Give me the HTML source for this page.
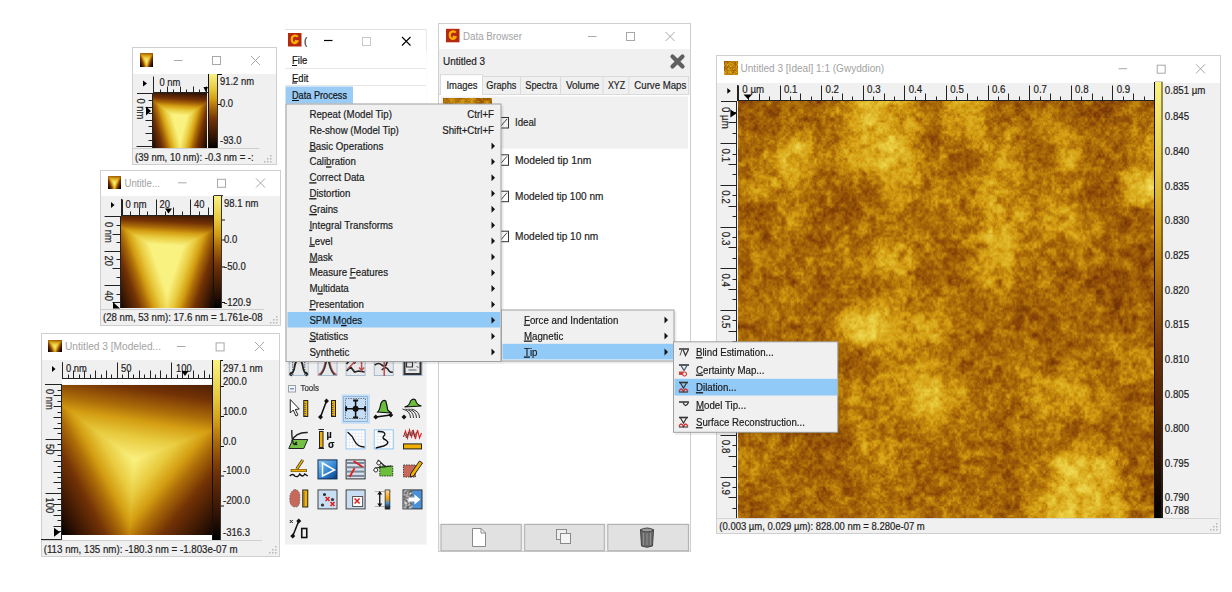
<!DOCTYPE html><html><head><meta charset="utf-8"><style>
html,body{margin:0;padding:0;background:#fff;width:1232px;height:592px;overflow:hidden}
svg{position:absolute;left:0;top:0}
text{font-family:"Liberation Sans",sans-serif}
canvas{position:absolute}
#wrap{position:absolute;left:0;top:0;width:1232px;height:592px;filter:blur(0.25px)}
</style></head><body><div id="wrap">
<svg width="1232" height="592" viewBox="0 0 1232 592" style="z-index:1"><rect x="132" y="47" width="145" height="118" fill="#cfcfcf" /><rect x="133" y="48" width="143" height="116" fill="#f0f0f0" /><rect x="133" y="48" width="143" height="26" fill="#ffffff" /><line x1="174" y1="60.5" x2="182.5" y2="60.5" stroke="#a8a8a8" stroke-width="1"/><rect x="212.5" y="56.5" width="8" height="8" fill="none" stroke="#a8a8a8" stroke-width="1"/><path d="M251 56 L260 65 M260 56 L251 65" fill="none" stroke="#a8a8a8" stroke-width="1" /><path d="M143 80.5 L147 83.5 L143 86.5 Z" fill="#000" stroke="none" stroke-width="1" /><line x1="153.5" y1="76.5" x2="153.5" y2="92.5" stroke="#222" stroke-width="1"/><line x1="153" y1="92.5" x2="209" y2="92.5" stroke="#222" stroke-width="1"/><line x1="160.5" y1="89.5" x2="160.5" y2="92.5" stroke="#222" stroke-width="1"/><line x1="167.5" y1="86.5" x2="167.5" y2="92.5" stroke="#222" stroke-width="1"/><line x1="173.5" y1="89.5" x2="173.5" y2="92.5" stroke="#222" stroke-width="1"/><line x1="180.5" y1="86.5" x2="180.5" y2="92.5" stroke="#222" stroke-width="1"/><line x1="186.5" y1="89.5" x2="186.5" y2="92.5" stroke="#222" stroke-width="1"/><line x1="193.5" y1="86.5" x2="193.5" y2="92.5" stroke="#222" stroke-width="1"/><line x1="199.5" y1="89.5" x2="199.5" y2="92.5" stroke="#222" stroke-width="1"/><line x1="206.5" y1="86.5" x2="206.5" y2="92.5" stroke="#222" stroke-width="1"/><text transform="translate(159.5,85.5) scale(0.86,1)" font-size="10.95" fill="#222" stroke="#222" stroke-width="0.2" >0 nm</text><path d="M203.5 87 L208 87 L205.75 92 Z" fill="#000" stroke="none" stroke-width="1" /><line x1="137" y1="93.5" x2="153" y2="93.5" stroke="#222" stroke-width="1"/><line x1="152.5" y1="93" x2="152.5" y2="148" stroke="#222" stroke-width="1"/><line x1="148.5" y1="100.5" x2="152.5" y2="100.5" stroke="#222" stroke-width="1"/><line x1="145.5" y1="107.5" x2="152.5" y2="107.5" stroke="#222" stroke-width="1"/><line x1="148.5" y1="113.5" x2="152.5" y2="113.5" stroke="#222" stroke-width="1"/><line x1="145.5" y1="120.5" x2="152.5" y2="120.5" stroke="#222" stroke-width="1"/><line x1="148.5" y1="126.5" x2="152.5" y2="126.5" stroke="#222" stroke-width="1"/><line x1="145.5" y1="133.5" x2="152.5" y2="133.5" stroke="#222" stroke-width="1"/><line x1="148.5" y1="140.5" x2="152.5" y2="140.5" stroke="#222" stroke-width="1"/><line x1="136.5" y1="146.5" x2="152.5" y2="146.5" stroke="#222" stroke-width="1"/><path d="M146 106.5 L151 111.0 L146 115.5 Z" fill="#000" stroke="none" stroke-width="1" /><text transform="translate(136.5,98.5) rotate(90) scale(0.86,1)" font-size="10.95" fill="#222" stroke="#222" stroke-width="0.2" >0 nm</text><line x1="208.5" y1="74" x2="208.5" y2="148" stroke="#111" stroke-width="1"/><line x1="209" y1="74.5" x2="222" y2="74.5" stroke="#111" stroke-width="1"/><line x1="218" y1="104.5" x2="221" y2="104.5" stroke="#111" stroke-width="1"/><text transform="translate(220,85.3) scale(0.86,1)" font-size="10.95" fill="#222" stroke="#222" stroke-width="0.2" >91.2 nm</text><text transform="translate(220,107.3) scale(0.86,1)" font-size="10.95" fill="#222" stroke="#222" stroke-width="0.2" >0.0</text><text transform="translate(220,144.3) scale(0.86,1)" font-size="10.95" fill="#222" stroke="#222" stroke-width="0.2" >-93.0</text><line x1="133" y1="148.5" x2="259" y2="148.5" stroke="#cfcfcf" stroke-width="1"/><text transform="translate(135,160.5) scale(0.86,1)" font-size="11.07" fill="#222" stroke="#222" stroke-width="0.2" >(39 nm, 10 nm): -0.3 nm = -:</text><rect x="259" y="149" width="17" height="15" fill="#f0f0f0" /><rect x="270" y="155" width="1.5" height="1.5" fill="#b8b8b8" /><rect x="267" y="158" width="1.5" height="1.5" fill="#b8b8b8" /><rect x="270" y="158" width="1.5" height="1.5" fill="#b8b8b8" /><rect x="264" y="161" width="1.5" height="1.5" fill="#b8b8b8" /><rect x="267" y="161" width="1.5" height="1.5" fill="#b8b8b8" /><rect x="270" y="161" width="1.5" height="1.5" fill="#b8b8b8" /><rect x="100" y="170" width="181" height="156" fill="#cfcfcf" /><rect x="101" y="171" width="179" height="154" fill="#f0f0f0" /><rect x="101" y="171" width="179" height="25" fill="#ffffff" /><text transform="translate(124.4,187) scale(0.86,1)" font-size="11.3" fill="#a2a2a2" textLength="41.28" lengthAdjust="spacingAndGlyphs" >Untitle...</text><line x1="178" y1="182.8" x2="186.5" y2="182.8" stroke="#a8a8a8" stroke-width="1"/><rect x="217.5" y="179.3" width="8" height="8" fill="none" stroke="#a8a8a8" stroke-width="1"/><path d="M256 178.5 L265 187.5 M265 178.5 L256 187.5" fill="none" stroke="#a8a8a8" stroke-width="1" /><path d="M111 202 L114.5 205.0 L111 208 Z" fill="#000" stroke="none" stroke-width="1" /><line x1="121.5" y1="198.8" x2="121.5" y2="215.5" stroke="#222" stroke-width="1"/><line x1="121" y1="215.5" x2="214" y2="215.5" stroke="#222" stroke-width="1"/><line x1="122.5" y1="199.5" x2="122.5" y2="215.5" stroke="#222" stroke-width="1"/><line x1="130.5" y1="211.5" x2="130.5" y2="215.5" stroke="#222" stroke-width="1"/><line x1="139.5" y1="207.5" x2="139.5" y2="215.5" stroke="#222" stroke-width="1"/><line x1="147.5" y1="211.5" x2="147.5" y2="215.5" stroke="#222" stroke-width="1"/><line x1="156.5" y1="199.5" x2="156.5" y2="215.5" stroke="#222" stroke-width="1"/><line x1="165.5" y1="211.5" x2="165.5" y2="215.5" stroke="#222" stroke-width="1"/><line x1="173.5" y1="207.5" x2="173.5" y2="215.5" stroke="#222" stroke-width="1"/><line x1="182.5" y1="211.5" x2="182.5" y2="215.5" stroke="#222" stroke-width="1"/><line x1="190.5" y1="199.5" x2="190.5" y2="215.5" stroke="#222" stroke-width="1"/><line x1="199.5" y1="211.5" x2="199.5" y2="215.5" stroke="#222" stroke-width="1"/><line x1="208.5" y1="207.5" x2="208.5" y2="215.5" stroke="#222" stroke-width="1"/><text transform="translate(125.6,207.5) scale(0.86,1)" font-size="10.95" fill="#222" stroke="#222" stroke-width="0.2" >0 nm</text><text transform="translate(159.5,207.5) scale(0.86,1)" font-size="10.95" fill="#222" stroke="#222" stroke-width="0.2" >20</text><text transform="translate(194,207.5) scale(0.86,1)" font-size="10.95" fill="#222" stroke="#222" stroke-width="0.2" >40</text><path d="M165 208.5 L172 208.5 L168.5 213.5 Z" fill="#000" stroke="none" stroke-width="1" /><line x1="104.6" y1="216.5" x2="121" y2="216.5" stroke="#222" stroke-width="1"/><line x1="120.5" y1="216" x2="120.5" y2="308" stroke="#222" stroke-width="1"/><line x1="116.5" y1="225.5" x2="120.5" y2="225.5" stroke="#222" stroke-width="1"/><line x1="112.5" y1="234.5" x2="120.5" y2="234.5" stroke="#222" stroke-width="1"/><line x1="116.5" y1="242.5" x2="120.5" y2="242.5" stroke="#222" stroke-width="1"/><line x1="104.5" y1="251.5" x2="120.5" y2="251.5" stroke="#222" stroke-width="1"/><line x1="116.5" y1="259.5" x2="120.5" y2="259.5" stroke="#222" stroke-width="1"/><line x1="112.5" y1="268.5" x2="120.5" y2="268.5" stroke="#222" stroke-width="1"/><line x1="116.5" y1="277.5" x2="120.5" y2="277.5" stroke="#222" stroke-width="1"/><line x1="104.5" y1="285.5" x2="120.5" y2="285.5" stroke="#222" stroke-width="1"/><line x1="116.5" y1="294.5" x2="120.5" y2="294.5" stroke="#222" stroke-width="1"/><line x1="112.5" y1="302.5" x2="120.5" y2="302.5" stroke="#222" stroke-width="1"/><text transform="translate(105.2,222) rotate(90) scale(0.86,1)" font-size="10.95" fill="#222" stroke="#222" stroke-width="0.2" >0 nm</text><text transform="translate(105.2,255.6) rotate(90) scale(0.86,1)" font-size="10.95" fill="#222" stroke="#222" stroke-width="0.2" >20</text><text transform="translate(105.2,290.6) rotate(90) scale(0.86,1)" font-size="10.95" fill="#222" stroke="#222" stroke-width="0.2" >40</text><path d="M113 302 L120 308.5 L113 308.5 Z" fill="#000" stroke="none" stroke-width="1" /><line x1="213.5" y1="195.7" x2="213.5" y2="308" stroke="#111" stroke-width="1"/><line x1="214" y1="195.7" x2="223" y2="195.7" stroke="#111" stroke-width="1"/><line x1="222" y1="220.0" x2="225" y2="220.0" stroke="#111" stroke-width="1"/><line x1="222" y1="240.0" x2="225" y2="240.0" stroke="#111" stroke-width="1"/><line x1="222" y1="267.0" x2="225" y2="267.0" stroke="#111" stroke-width="1"/><line x1="222" y1="302.5" x2="225" y2="302.5" stroke="#111" stroke-width="1"/><text transform="translate(224,207.4) scale(0.86,1)" font-size="11.07" fill="#222" stroke="#222" stroke-width="0.2" >98.1 nm</text><text transform="translate(224,242.8) scale(0.86,1)" font-size="11.07" fill="#222" stroke="#222" stroke-width="0.2" >0.0</text><text transform="translate(224,270) scale(0.86,1)" font-size="11.07" fill="#222" stroke="#222" stroke-width="0.2" >-50.0</text><text transform="translate(224,305.5) scale(0.86,1)" font-size="11.07" fill="#222" stroke="#222" stroke-width="0.2" >-120.9</text><line x1="101" y1="309.5" x2="264" y2="309.5" stroke="#cfcfcf" stroke-width="1"/><text transform="translate(103,321) scale(0.86,1)" font-size="11.07" fill="#222" textLength="185.47" lengthAdjust="spacingAndGlyphs" stroke="#222" stroke-width="0.2" >(28 nm, 53 nm): 17.6 nm = 1.761e-08</text><rect x="276" y="316" width="1.5" height="1.5" fill="#b8b8b8" /><rect x="273" y="319" width="1.5" height="1.5" fill="#b8b8b8" /><rect x="276" y="319" width="1.5" height="1.5" fill="#b8b8b8" /><rect x="270" y="322" width="1.5" height="1.5" fill="#b8b8b8" /><rect x="273" y="322" width="1.5" height="1.5" fill="#b8b8b8" /><rect x="276" y="322" width="1.5" height="1.5" fill="#b8b8b8" /><rect x="41" y="333" width="239" height="224" fill="#cfcfcf" /><rect x="42" y="334" width="237" height="222" fill="#f0f0f0" /><rect x="42" y="334" width="237" height="26" fill="#ffffff" /><text transform="translate(65,350) scale(0.86,1)" font-size="11.3" fill="#a2a2a2" textLength="111.63" lengthAdjust="spacingAndGlyphs" >Untitled 3 [Modeled...</text><line x1="177" y1="346.5" x2="185.5" y2="346.5" stroke="#a8a8a8" stroke-width="1"/><rect x="216.1" y="342.9" width="8" height="8" fill="none" stroke="#a8a8a8" stroke-width="1"/><path d="M255 342 L264 351 M264 342 L255 351" fill="none" stroke="#a8a8a8" stroke-width="1" /><path d="M52 366 L55.5 369.0 L52 372 Z" fill="#000" stroke="none" stroke-width="1" /><line x1="62.5" y1="362.3" x2="62.5" y2="378.5" stroke="#222" stroke-width="1"/><line x1="62" y1="378.5" x2="213" y2="378.5" stroke="#222" stroke-width="1"/><line x1="62.5" y1="362.5" x2="62.5" y2="378.5" stroke="#222" stroke-width="1"/><line x1="68.5" y1="374.5" x2="68.5" y2="378.5" stroke="#222" stroke-width="1"/><line x1="73.5" y1="370.5" x2="73.5" y2="378.5" stroke="#222" stroke-width="1"/><line x1="79.5" y1="374.5" x2="79.5" y2="378.5" stroke="#222" stroke-width="1"/><line x1="84.5" y1="370.5" x2="84.5" y2="378.5" stroke="#222" stroke-width="1"/><line x1="90.5" y1="374.5" x2="90.5" y2="378.5" stroke="#222" stroke-width="1"/><line x1="95.5" y1="370.5" x2="95.5" y2="378.5" stroke="#222" stroke-width="1"/><line x1="101.5" y1="374.5" x2="101.5" y2="378.5" stroke="#222" stroke-width="1"/><line x1="106.5" y1="370.5" x2="106.5" y2="378.5" stroke="#222" stroke-width="1"/><line x1="111.5" y1="374.5" x2="111.5" y2="378.5" stroke="#222" stroke-width="1"/><line x1="117.5" y1="362.5" x2="117.5" y2="378.5" stroke="#222" stroke-width="1"/><line x1="122.5" y1="374.5" x2="122.5" y2="378.5" stroke="#222" stroke-width="1"/><line x1="128.5" y1="370.5" x2="128.5" y2="378.5" stroke="#222" stroke-width="1"/><line x1="133.5" y1="374.5" x2="133.5" y2="378.5" stroke="#222" stroke-width="1"/><line x1="139.5" y1="370.5" x2="139.5" y2="378.5" stroke="#222" stroke-width="1"/><line x1="144.5" y1="374.5" x2="144.5" y2="378.5" stroke="#222" stroke-width="1"/><line x1="150.5" y1="370.5" x2="150.5" y2="378.5" stroke="#222" stroke-width="1"/><line x1="155.5" y1="374.5" x2="155.5" y2="378.5" stroke="#222" stroke-width="1"/><line x1="160.5" y1="370.5" x2="160.5" y2="378.5" stroke="#222" stroke-width="1"/><line x1="166.5" y1="374.5" x2="166.5" y2="378.5" stroke="#222" stroke-width="1"/><line x1="171.5" y1="362.5" x2="171.5" y2="378.5" stroke="#222" stroke-width="1"/><line x1="177.5" y1="374.5" x2="177.5" y2="378.5" stroke="#222" stroke-width="1"/><line x1="182.5" y1="370.5" x2="182.5" y2="378.5" stroke="#222" stroke-width="1"/><line x1="188.5" y1="374.5" x2="188.5" y2="378.5" stroke="#222" stroke-width="1"/><line x1="193.5" y1="370.5" x2="193.5" y2="378.5" stroke="#222" stroke-width="1"/><line x1="198.5" y1="374.5" x2="198.5" y2="378.5" stroke="#222" stroke-width="1"/><line x1="204.5" y1="370.5" x2="204.5" y2="378.5" stroke="#222" stroke-width="1"/><line x1="209.5" y1="374.5" x2="209.5" y2="378.5" stroke="#222" stroke-width="1"/><text transform="translate(66,371.8) scale(0.86,1)" font-size="10.95" fill="#222" stroke="#222" stroke-width="0.2" >0 nm</text><text transform="translate(121,371.8) scale(0.86,1)" font-size="10.95" fill="#222" stroke="#222" stroke-width="0.2" >50</text><text transform="translate(176,371.8) scale(0.86,1)" font-size="10.95" fill="#222" stroke="#222" stroke-width="0.2" >100</text><path d="M181.5 371 L188.5 371 L185.0 376 Z" fill="#000" stroke="none" stroke-width="1" /><rect x="62" y="379" width="150" height="5.5" fill="#ffffff" /><line x1="45" y1="384.5" x2="61" y2="384.5" stroke="#222" stroke-width="1"/><line x1="61.5" y1="384" x2="61.5" y2="540" stroke="#222" stroke-width="1"/><line x1="57.5" y1="390.5" x2="61.5" y2="390.5" stroke="#222" stroke-width="1"/><line x1="53.5" y1="395.5" x2="61.5" y2="395.5" stroke="#222" stroke-width="1"/><line x1="57.5" y1="401.5" x2="61.5" y2="401.5" stroke="#222" stroke-width="1"/><line x1="53.5" y1="406.5" x2="61.5" y2="406.5" stroke="#222" stroke-width="1"/><line x1="57.5" y1="412.5" x2="61.5" y2="412.5" stroke="#222" stroke-width="1"/><line x1="53.5" y1="417.5" x2="61.5" y2="417.5" stroke="#222" stroke-width="1"/><line x1="57.5" y1="423.5" x2="61.5" y2="423.5" stroke="#222" stroke-width="1"/><line x1="53.5" y1="428.5" x2="61.5" y2="428.5" stroke="#222" stroke-width="1"/><line x1="57.5" y1="433.5" x2="61.5" y2="433.5" stroke="#222" stroke-width="1"/><line x1="45.5" y1="439.5" x2="61.5" y2="439.5" stroke="#222" stroke-width="1"/><line x1="57.5" y1="444.5" x2="61.5" y2="444.5" stroke="#222" stroke-width="1"/><line x1="53.5" y1="450.5" x2="61.5" y2="450.5" stroke="#222" stroke-width="1"/><line x1="57.5" y1="455.5" x2="61.5" y2="455.5" stroke="#222" stroke-width="1"/><line x1="53.5" y1="461.5" x2="61.5" y2="461.5" stroke="#222" stroke-width="1"/><line x1="57.5" y1="466.5" x2="61.5" y2="466.5" stroke="#222" stroke-width="1"/><line x1="53.5" y1="472.5" x2="61.5" y2="472.5" stroke="#222" stroke-width="1"/><line x1="57.5" y1="477.5" x2="61.5" y2="477.5" stroke="#222" stroke-width="1"/><line x1="53.5" y1="482.5" x2="61.5" y2="482.5" stroke="#222" stroke-width="1"/><line x1="57.5" y1="488.5" x2="61.5" y2="488.5" stroke="#222" stroke-width="1"/><line x1="45.5" y1="493.5" x2="61.5" y2="493.5" stroke="#222" stroke-width="1"/><line x1="57.5" y1="499.5" x2="61.5" y2="499.5" stroke="#222" stroke-width="1"/><line x1="53.5" y1="504.5" x2="61.5" y2="504.5" stroke="#222" stroke-width="1"/><line x1="57.5" y1="510.5" x2="61.5" y2="510.5" stroke="#222" stroke-width="1"/><line x1="53.5" y1="515.5" x2="61.5" y2="515.5" stroke="#222" stroke-width="1"/><line x1="57.5" y1="520.5" x2="61.5" y2="520.5" stroke="#222" stroke-width="1"/><line x1="53.5" y1="526.5" x2="61.5" y2="526.5" stroke="#222" stroke-width="1"/><line x1="57.5" y1="531.5" x2="61.5" y2="531.5" stroke="#222" stroke-width="1"/><text transform="translate(45.5,389) rotate(90) scale(0.86,1)" font-size="10.95" fill="#222" stroke="#222" stroke-width="0.2" >0 nm</text><text transform="translate(45.5,444) rotate(90) scale(0.86,1)" font-size="10.95" fill="#222" stroke="#222" stroke-width="0.2" >50</text><text transform="translate(45.5,497.5) rotate(90) scale(0.86,1)" font-size="10.95" fill="#222" stroke="#222" stroke-width="0.2" >100</text><path d="M54 527.8 L60 532.3 L54 536.8 Z" fill="#000" stroke="none" stroke-width="1" /><rect x="62" y="534.5" width="150" height="5.5" fill="#ffffff" /><line x1="41" y1="539.5" x2="62" y2="539.5" stroke="#222" stroke-width="1"/><line x1="212.5" y1="360" x2="212.5" y2="540" stroke="#111" stroke-width="1"/><line x1="213" y1="360.5" x2="223" y2="360.5" stroke="#111" stroke-width="1"/><text transform="translate(223,371.5) scale(0.86,1)" font-size="11.07" fill="#222" stroke="#222" stroke-width="0.2" >297.1 nm</text><text transform="translate(223,384.5) scale(0.86,1)" font-size="11.07" fill="#222" stroke="#222" stroke-width="0.2" >200.0</text><text transform="translate(223,414.5) scale(0.86,1)" font-size="11.07" fill="#222" stroke="#222" stroke-width="0.2" >100.0</text><text transform="translate(223,444.5) scale(0.86,1)" font-size="11.07" fill="#222" stroke="#222" stroke-width="0.2" >0.0</text><text transform="translate(223,473.8) scale(0.86,1)" font-size="11.07" fill="#222" stroke="#222" stroke-width="0.2" >-100.0</text><text transform="translate(223,503.8) scale(0.86,1)" font-size="11.07" fill="#222" stroke="#222" stroke-width="0.2" >-200.0</text><text transform="translate(223,536.3) scale(0.86,1)" font-size="11.07" fill="#222" stroke="#222" stroke-width="0.2" >-316.3</text><line x1="220" y1="386.5" x2="224" y2="386.5" stroke="#111" stroke-width="1"/><line x1="220" y1="416.5" x2="224" y2="416.5" stroke="#111" stroke-width="1"/><line x1="220" y1="446.5" x2="224" y2="446.5" stroke="#111" stroke-width="1"/><line x1="220" y1="476.0" x2="224" y2="476.0" stroke="#111" stroke-width="1"/><line x1="220" y1="506.0" x2="224" y2="506.0" stroke="#111" stroke-width="1"/><line x1="41" y1="540.5" x2="262" y2="540.5" stroke="#cfcfcf" stroke-width="1"/><text transform="translate(43.7,552.5) scale(0.86,1)" font-size="11.07" fill="#222" textLength="225.58" lengthAdjust="spacingAndGlyphs" stroke="#222" stroke-width="0.2" >(113 nm, 135 nm): -180.3 nm = -1.803e-07 m</text><rect x="275" y="546" width="1.5" height="1.5" fill="#b8b8b8" /><rect x="272" y="549" width="1.5" height="1.5" fill="#b8b8b8" /><rect x="275" y="549" width="1.5" height="1.5" fill="#b8b8b8" /><rect x="269" y="552" width="1.5" height="1.5" fill="#b8b8b8" /><rect x="272" y="552" width="1.5" height="1.5" fill="#b8b8b8" /><rect x="275" y="552" width="1.5" height="1.5" fill="#b8b8b8" /><rect x="285" y="30" width="141.5" height="514.5" fill="#f0f0f0" /><rect x="285" y="30" width="141.5" height="73.5" fill="#ffffff" /><line x1="426.5" y1="30" x2="426.5" y2="51" stroke="#e8e8e8" stroke-width="1"/><line x1="285" y1="29.5" x2="426.5" y2="29.5" stroke="#e0e0e0" stroke-width="1"/><rect x="288" y="33" width="13.5" height="13.5" fill="#b52a0f" /><path d="M297.72 36.78 C296.1 34.62 291.375 35.43 291.78 39.75 C292.05 43.8 296.1 44.07 297.45 41.37 L294.75 40.83" fill="none" stroke="#ffb000" stroke-width="2.16" /><text transform="translate(304,44.5) scale(0.86,1)" font-size="11.3" fill="#222" stroke="#222" stroke-width="0.2" >(</text><line x1="324" y1="40.5" x2="332.5" y2="40.5" stroke="#000" stroke-width="1.2"/><rect x="362.5" y="37.5" width="8" height="8" fill="none" stroke="#c8c8c8" stroke-width="1"/><path d="M402 37 L410.5 45.5 M410.5 37 L402 45.5" fill="none" stroke="#000" stroke-width="1.1" /><line x1="285" y1="68.5" x2="426" y2="68.5" stroke="#e6e6e6" stroke-width="1"/><line x1="285" y1="85.5" x2="426" y2="85.5" stroke="#e6e6e6" stroke-width="1"/><text transform="translate(292,64) scale(0.86,1)" font-size="11.07" fill="#111" stroke="#111" stroke-width="0.2" >File</text><line x1="292" y1="65.5" x2="297" y2="65.5" stroke="#111" stroke-width="1"/><text transform="translate(292,81.5) scale(0.86,1)" font-size="11.07" fill="#111" stroke="#111" stroke-width="0.2" >Edit</text><line x1="292" y1="83" x2="297" y2="83" stroke="#111" stroke-width="1"/><rect x="285.5" y="86.5" width="67.5" height="17" fill="#99cbf5" /><text transform="translate(292,99) scale(0.86,1)" font-size="10.84" fill="#111" textLength="63.95" lengthAdjust="spacingAndGlyphs" stroke="#111" stroke-width="0.2" >Data Process</text><line x1="292" y1="100.5" x2="299" y2="100.5" stroke="#111" stroke-width="1"/><rect x="438" y="23" width="253" height="529" fill="#cfcfcf" /><rect x="439" y="24" width="251" height="527" fill="#f0f0f0" /><rect x="439" y="24" width="251" height="25" fill="#ffffff" /><rect x="446" y="28.8" width="13.5" height="13.5" fill="#b52a0f" /><path d="M455.72 32.58 C454.1 30.42 449.375 31.23 449.78 35.55 C450.05 39.6 454.1 39.87 455.45 37.17 L452.75 36.63" fill="none" stroke="#ffb000" stroke-width="2.16" /><text transform="translate(463,40) scale(0.86,1)" font-size="11.3" fill="#a2a2a2" textLength="68.6" lengthAdjust="spacingAndGlyphs" >Data Browser</text><line x1="588" y1="36.5" x2="596.5" y2="36.5" stroke="#a8a8a8" stroke-width="1"/><rect x="626.5" y="32.5" width="8" height="8" fill="none" stroke="#a8a8a8" stroke-width="1"/><path d="M665.6 32 L674.6 41 M674.6 32 L665.6 41" fill="none" stroke="#a8a8a8" stroke-width="1" /><text transform="translate(443,64.5) scale(0.86,1)" font-size="11.3" fill="#222" textLength="48.84" lengthAdjust="spacingAndGlyphs" stroke="#222" stroke-width="0.2" >Untitled 3</text><path d="M672.5 56.5 L682.5 66.5 M682.5 56.5 L672.5 66.5" fill="none" stroke="#5f5f5f" stroke-width="4.2" stroke-linecap="round"/><rect x="439" y="75" width="251" height="20" fill="#f0f0f0" /><line x1="439" y1="94.5" x2="689" y2="94.5" stroke="#dadada" stroke-width="1"/><rect x="440" y="74.7" width="42" height="20.5" fill="#ffffff" /><line x1="440.5" y1="74.7" x2="440.5" y2="95" stroke="#dadada" stroke-width="1"/><line x1="482.5" y1="74.7" x2="482.5" y2="95" stroke="#dadada" stroke-width="1"/><line x1="440" y1="74.7" x2="482.5" y2="74.7" stroke="#dadada" stroke-width="1"/><line x1="482" y1="76.5" x2="689" y2="76.5" stroke="#dadada" stroke-width="1"/><line x1="520.5" y1="76.5" x2="520.5" y2="94.5" stroke="#dadada" stroke-width="1"/><line x1="560.5" y1="76.5" x2="560.5" y2="94.5" stroke="#dadada" stroke-width="1"/><line x1="603" y1="76.5" x2="603" y2="94.5" stroke="#dadada" stroke-width="1"/><line x1="628.8" y1="76.5" x2="628.8" y2="94.5" stroke="#dadada" stroke-width="1"/><line x1="688.5" y1="76.5" x2="688.5" y2="94.5" stroke="#dadada" stroke-width="1"/><text transform="translate(446.4,88.9) scale(0.86,1)" font-size="11.3" fill="#222" textLength="36.05" lengthAdjust="spacingAndGlyphs" stroke="#222" stroke-width="0.2" >Images</text><text transform="translate(486.3,88.9) scale(0.86,1)" font-size="11.3" fill="#222" textLength="35.0" lengthAdjust="spacingAndGlyphs" stroke="#222" stroke-width="0.2" >Graphs</text><text transform="translate(525.3,88.9) scale(0.86,1)" font-size="11.3" fill="#222" textLength="37.09" lengthAdjust="spacingAndGlyphs" stroke="#222" stroke-width="0.2" >Spectra</text><text transform="translate(565.9,88.9) scale(0.86,1)" font-size="11.3" fill="#222" textLength="38.84" lengthAdjust="spacingAndGlyphs" stroke="#222" stroke-width="0.2" >Volume</text><text transform="translate(607.9,88.9) scale(0.86,1)" font-size="11.3" fill="#222" textLength="19.88" lengthAdjust="spacingAndGlyphs" stroke="#222" stroke-width="0.2" >XYZ</text><text transform="translate(634.3,88.9) scale(0.86,1)" font-size="11.3" fill="#222" textLength="60.47" lengthAdjust="spacingAndGlyphs" stroke="#222" stroke-width="0.2" >Curve Maps</text><rect x="439" y="95" width="251" height="428.5" fill="#ffffff" /><rect x="441" y="96.5" width="247" height="52" fill="#f0f0f0" /><rect x="498.5" y="117.5" width="10" height="10.5" fill="none" stroke="#333" stroke-width="1"/><path d="M500.5 126.5 L507 119.0" fill="none" stroke="#444" stroke-width="1" /><text transform="translate(515,126.2) scale(0.86,1)" font-size="11.3" fill="#222" textLength="24.42" lengthAdjust="spacingAndGlyphs" stroke="#222" stroke-width="0.2" >Ideal</text><rect x="498.5" y="154.8" width="10" height="10.5" fill="none" stroke="#333" stroke-width="1"/><path d="M500.5 163.8 L507 156.3" fill="none" stroke="#444" stroke-width="1" /><text transform="translate(515,163.5) scale(0.86,1)" font-size="11.3" fill="#222" textLength="88.72" lengthAdjust="spacingAndGlyphs" stroke="#222" stroke-width="0.2" >Modeled tip 1nm</text><rect x="498.5" y="191.2" width="10" height="10.5" fill="none" stroke="#333" stroke-width="1"/><path d="M500.5 200.2 L507 192.7" fill="none" stroke="#444" stroke-width="1" /><text transform="translate(515,199.89999999999998) scale(0.86,1)" font-size="11.3" fill="#222" textLength="102.79" lengthAdjust="spacingAndGlyphs" stroke="#222" stroke-width="0.2" >Modeled tip 100 nm</text><rect x="498.5" y="231.2" width="10" height="10.5" fill="none" stroke="#333" stroke-width="1"/><path d="M500.5 240.2 L507 232.7" fill="none" stroke="#444" stroke-width="1" /><text transform="translate(515,239.89999999999998) scale(0.86,1)" font-size="11.3" fill="#222" textLength="96.74" lengthAdjust="spacingAndGlyphs" stroke="#222" stroke-width="0.2" >Modeled tip 10 nm</text><rect x="440.5" y="523.9" width="81.2" height="27.4" fill="#adadad" /><rect x="441.5" y="524.9" width="79.2" height="25.4" fill="#e1e1e1" /><rect x="524.2" y="523.9" width="80.6" height="27.4" fill="#adadad" /><rect x="525.2" y="524.9" width="78.6" height="25.4" fill="#e1e1e1" /><rect x="607.3" y="523.9" width="81.6" height="27.4" fill="#adadad" /><rect x="608.3" y="524.9" width="79.6" height="25.4" fill="#e1e1e1" /><path d="M472.5 528.5 L481 528.5 L485.5 533 L485.5 546.5 L472.5 546.5 Z" fill="#fff" stroke="#8a8a8a" stroke-width="1" /><path d="M481 528.5 L481 533 L485.5 533" fill="none" stroke="#8a8a8a" stroke-width="1" /><rect x="556.5" y="529.5" width="10" height="10" fill="#eee" stroke="#8a8a8a" stroke-width="1"/><rect x="560.5" y="533.5" width="10" height="10" fill="#f4f4f4" stroke="#8a8a8a" stroke-width="1"/><path d="M640.5 530 L653.5 530 L652.5 546 Q647 548.5 641.5 546 Z" fill="#6a6a6a" stroke="#444" stroke-width="1" /><path d="M640 530 Q647 526 654 530 Q647 534 640 530 Z" fill="#999" stroke="#444" stroke-width="1" /><line x1="643.5" y1="533" x2="643.5" y2="545" stroke="#8f8f8f" stroke-width="1"/><line x1="647" y1="533" x2="647" y2="545" stroke="#8f8f8f" stroke-width="1"/><line x1="650.5" y1="533" x2="650.5" y2="545" stroke="#8f8f8f" stroke-width="1"/><rect x="716" y="55" width="505" height="479" fill="#cfcfcf" /><rect x="717" y="56" width="503" height="477" fill="#f0f0f0" /><rect x="717" y="56" width="503" height="27" fill="#ffffff" /><text transform="translate(740.5,72.3) scale(0.86,1)" font-size="11.3" fill="#a2a2a2" textLength="167.09" lengthAdjust="spacingAndGlyphs" >Untitled 3 [Ideal] 1:1 (Gwyddion)</text><line x1="1118.6" y1="68.7" x2="1127.1" y2="68.7" stroke="#a8a8a8" stroke-width="1"/><rect x="1157.2" y="65.2" width="8" height="8" fill="none" stroke="#a8a8a8" stroke-width="1"/><path d="M1196 64.3 L1205 73.3 M1205 64.3 L1196 73.3" fill="none" stroke="#a8a8a8" stroke-width="1" /><path d="M727.3 88 L730.8 90.9 L727.3 93.8 Z" fill="#000" stroke="none" stroke-width="1" /><line x1="737.5" y1="85" x2="737.5" y2="100.5" stroke="#222" stroke-width="1"/><line x1="737" y1="100.5" x2="1154" y2="100.5" stroke="#222" stroke-width="1"/><line x1="738.5" y1="85.5" x2="738.5" y2="100.5" stroke="#222" stroke-width="1"/><line x1="748.5" y1="96.5" x2="748.5" y2="100.5" stroke="#222" stroke-width="1"/><line x1="759.5" y1="93.5" x2="759.5" y2="100.5" stroke="#222" stroke-width="1"/><line x1="769.5" y1="96.5" x2="769.5" y2="100.5" stroke="#222" stroke-width="1"/><line x1="780.5" y1="85.5" x2="780.5" y2="100.5" stroke="#222" stroke-width="1"/><line x1="790.5" y1="96.5" x2="790.5" y2="100.5" stroke="#222" stroke-width="1"/><line x1="800.5" y1="93.5" x2="800.5" y2="100.5" stroke="#222" stroke-width="1"/><line x1="811.5" y1="96.5" x2="811.5" y2="100.5" stroke="#222" stroke-width="1"/><line x1="821.5" y1="85.5" x2="821.5" y2="100.5" stroke="#222" stroke-width="1"/><line x1="832.5" y1="96.5" x2="832.5" y2="100.5" stroke="#222" stroke-width="1"/><line x1="842.5" y1="93.5" x2="842.5" y2="100.5" stroke="#222" stroke-width="1"/><line x1="852.5" y1="96.5" x2="852.5" y2="100.5" stroke="#222" stroke-width="1"/><line x1="863.5" y1="85.5" x2="863.5" y2="100.5" stroke="#222" stroke-width="1"/><line x1="873.5" y1="96.5" x2="873.5" y2="100.5" stroke="#222" stroke-width="1"/><line x1="884.5" y1="93.5" x2="884.5" y2="100.5" stroke="#222" stroke-width="1"/><line x1="894.5" y1="96.5" x2="894.5" y2="100.5" stroke="#222" stroke-width="1"/><line x1="904.5" y1="85.5" x2="904.5" y2="100.5" stroke="#222" stroke-width="1"/><line x1="915.5" y1="96.5" x2="915.5" y2="100.5" stroke="#222" stroke-width="1"/><line x1="925.5" y1="93.5" x2="925.5" y2="100.5" stroke="#222" stroke-width="1"/><line x1="936.5" y1="96.5" x2="936.5" y2="100.5" stroke="#222" stroke-width="1"/><line x1="946.5" y1="85.5" x2="946.5" y2="100.5" stroke="#222" stroke-width="1"/><line x1="956.5" y1="96.5" x2="956.5" y2="100.5" stroke="#222" stroke-width="1"/><line x1="967.5" y1="93.5" x2="967.5" y2="100.5" stroke="#222" stroke-width="1"/><line x1="977.5" y1="96.5" x2="977.5" y2="100.5" stroke="#222" stroke-width="1"/><line x1="988.5" y1="85.5" x2="988.5" y2="100.5" stroke="#222" stroke-width="1"/><line x1="998.5" y1="96.5" x2="998.5" y2="100.5" stroke="#222" stroke-width="1"/><line x1="1008.5" y1="93.5" x2="1008.5" y2="100.5" stroke="#222" stroke-width="1"/><line x1="1019.5" y1="96.5" x2="1019.5" y2="100.5" stroke="#222" stroke-width="1"/><line x1="1029.5" y1="85.5" x2="1029.5" y2="100.5" stroke="#222" stroke-width="1"/><line x1="1040.5" y1="96.5" x2="1040.5" y2="100.5" stroke="#222" stroke-width="1"/><line x1="1050.5" y1="93.5" x2="1050.5" y2="100.5" stroke="#222" stroke-width="1"/><line x1="1060.5" y1="96.5" x2="1060.5" y2="100.5" stroke="#222" stroke-width="1"/><line x1="1071.5" y1="85.5" x2="1071.5" y2="100.5" stroke="#222" stroke-width="1"/><line x1="1081.5" y1="96.5" x2="1081.5" y2="100.5" stroke="#222" stroke-width="1"/><line x1="1092.5" y1="93.5" x2="1092.5" y2="100.5" stroke="#222" stroke-width="1"/><line x1="1102.5" y1="96.5" x2="1102.5" y2="100.5" stroke="#222" stroke-width="1"/><line x1="1112.5" y1="85.5" x2="1112.5" y2="100.5" stroke="#222" stroke-width="1"/><line x1="1123.5" y1="96.5" x2="1123.5" y2="100.5" stroke="#222" stroke-width="1"/><line x1="1133.5" y1="93.5" x2="1133.5" y2="100.5" stroke="#222" stroke-width="1"/><line x1="1144.5" y1="96.5" x2="1144.5" y2="100.5" stroke="#222" stroke-width="1"/><text transform="translate(742.3,93.3) scale(0.86,1)" font-size="11.3" fill="#222" stroke="#222" stroke-width="0.2" >0 µm</text><text transform="translate(783.9,93.3) scale(0.86,1)" font-size="11.3" fill="#222" stroke="#222" stroke-width="0.2" >0.1</text><text transform="translate(825.5,93.3) scale(0.86,1)" font-size="11.3" fill="#222" stroke="#222" stroke-width="0.2" >0.2</text><text transform="translate(867.0999999999999,93.3) scale(0.86,1)" font-size="11.3" fill="#222" stroke="#222" stroke-width="0.2" >0.3</text><text transform="translate(908.6999999999999,93.3) scale(0.86,1)" font-size="11.3" fill="#222" stroke="#222" stroke-width="0.2" >0.4</text><text transform="translate(950.3,93.3) scale(0.86,1)" font-size="11.3" fill="#222" stroke="#222" stroke-width="0.2" >0.5</text><text transform="translate(991.9,93.3) scale(0.86,1)" font-size="11.3" fill="#222" stroke="#222" stroke-width="0.2" >0.6</text><text transform="translate(1033.5,93.3) scale(0.86,1)" font-size="11.3" fill="#222" stroke="#222" stroke-width="0.2" >0.7</text><text transform="translate(1075.1,93.3) scale(0.86,1)" font-size="11.3" fill="#222" stroke="#222" stroke-width="0.2" >0.8</text><text transform="translate(1116.7,93.3) scale(0.86,1)" font-size="11.3" fill="#222" stroke="#222" stroke-width="0.2" >0.9</text><path d="M743.5 94.5 L752.2 94.5 L747.85 99.0 Z" fill="#000" stroke="none" stroke-width="1" /><line x1="721" y1="101.5" x2="737" y2="101.5" stroke="#222" stroke-width="1"/><line x1="736.5" y1="101" x2="736.5" y2="518" stroke="#222" stroke-width="1"/><line x1="732.5" y1="112.5" x2="736.5" y2="112.5" stroke="#222" stroke-width="1"/><line x1="728.5" y1="122.5" x2="736.5" y2="122.5" stroke="#222" stroke-width="1"/><line x1="732.5" y1="133.5" x2="736.5" y2="133.5" stroke="#222" stroke-width="1"/><line x1="720.5" y1="143.5" x2="736.5" y2="143.5" stroke="#222" stroke-width="1"/><line x1="732.5" y1="154.5" x2="736.5" y2="154.5" stroke="#222" stroke-width="1"/><line x1="728.5" y1="164.5" x2="736.5" y2="164.5" stroke="#222" stroke-width="1"/><line x1="732.5" y1="174.5" x2="736.5" y2="174.5" stroke="#222" stroke-width="1"/><line x1="720.5" y1="185.5" x2="736.5" y2="185.5" stroke="#222" stroke-width="1"/><line x1="732.5" y1="195.5" x2="736.5" y2="195.5" stroke="#222" stroke-width="1"/><line x1="728.5" y1="206.5" x2="736.5" y2="206.5" stroke="#222" stroke-width="1"/><line x1="732.5" y1="216.5" x2="736.5" y2="216.5" stroke="#222" stroke-width="1"/><line x1="720.5" y1="227.5" x2="736.5" y2="227.5" stroke="#222" stroke-width="1"/><line x1="732.5" y1="237.5" x2="736.5" y2="237.5" stroke="#222" stroke-width="1"/><line x1="728.5" y1="247.5" x2="736.5" y2="247.5" stroke="#222" stroke-width="1"/><line x1="732.5" y1="258.5" x2="736.5" y2="258.5" stroke="#222" stroke-width="1"/><line x1="720.5" y1="268.5" x2="736.5" y2="268.5" stroke="#222" stroke-width="1"/><line x1="732.5" y1="279.5" x2="736.5" y2="279.5" stroke="#222" stroke-width="1"/><line x1="728.5" y1="289.5" x2="736.5" y2="289.5" stroke="#222" stroke-width="1"/><line x1="732.5" y1="299.5" x2="736.5" y2="299.5" stroke="#222" stroke-width="1"/><line x1="720.5" y1="310.5" x2="736.5" y2="310.5" stroke="#222" stroke-width="1"/><line x1="732.5" y1="320.5" x2="736.5" y2="320.5" stroke="#222" stroke-width="1"/><line x1="728.5" y1="331.5" x2="736.5" y2="331.5" stroke="#222" stroke-width="1"/><line x1="732.5" y1="341.5" x2="736.5" y2="341.5" stroke="#222" stroke-width="1"/><line x1="720.5" y1="352.5" x2="736.5" y2="352.5" stroke="#222" stroke-width="1"/><line x1="732.5" y1="362.5" x2="736.5" y2="362.5" stroke="#222" stroke-width="1"/><line x1="728.5" y1="372.5" x2="736.5" y2="372.5" stroke="#222" stroke-width="1"/><line x1="732.5" y1="383.5" x2="736.5" y2="383.5" stroke="#222" stroke-width="1"/><line x1="720.5" y1="393.5" x2="736.5" y2="393.5" stroke="#222" stroke-width="1"/><line x1="732.5" y1="404.5" x2="736.5" y2="404.5" stroke="#222" stroke-width="1"/><line x1="728.5" y1="414.5" x2="736.5" y2="414.5" stroke="#222" stroke-width="1"/><line x1="732.5" y1="425.5" x2="736.5" y2="425.5" stroke="#222" stroke-width="1"/><line x1="720.5" y1="435.5" x2="736.5" y2="435.5" stroke="#222" stroke-width="1"/><line x1="732.5" y1="445.5" x2="736.5" y2="445.5" stroke="#222" stroke-width="1"/><line x1="728.5" y1="456.5" x2="736.5" y2="456.5" stroke="#222" stroke-width="1"/><line x1="732.5" y1="466.5" x2="736.5" y2="466.5" stroke="#222" stroke-width="1"/><line x1="720.5" y1="477.5" x2="736.5" y2="477.5" stroke="#222" stroke-width="1"/><line x1="732.5" y1="487.5" x2="736.5" y2="487.5" stroke="#222" stroke-width="1"/><line x1="728.5" y1="497.5" x2="736.5" y2="497.5" stroke="#222" stroke-width="1"/><line x1="732.5" y1="508.5" x2="736.5" y2="508.5" stroke="#222" stroke-width="1"/><text transform="translate(721.5,107.0) rotate(90) scale(0.86,1)" font-size="11.3" fill="#222" stroke="#222" stroke-width="0.2" >0 µm</text><text transform="translate(721.5,148.6) rotate(90) scale(0.86,1)" font-size="11.3" fill="#222" stroke="#222" stroke-width="0.2" >0.1</text><text transform="translate(721.5,190.2) rotate(90) scale(0.86,1)" font-size="11.3" fill="#222" stroke="#222" stroke-width="0.2" >0.2</text><text transform="translate(721.5,231.8) rotate(90) scale(0.86,1)" font-size="11.3" fill="#222" stroke="#222" stroke-width="0.2" >0.3</text><text transform="translate(721.5,273.4) rotate(90) scale(0.86,1)" font-size="11.3" fill="#222" stroke="#222" stroke-width="0.2" >0.4</text><text transform="translate(721.5,315.0) rotate(90) scale(0.86,1)" font-size="11.3" fill="#222" stroke="#222" stroke-width="0.2" >0.5</text><text transform="translate(721.5,356.6) rotate(90) scale(0.86,1)" font-size="11.3" fill="#222" stroke="#222" stroke-width="0.2" >0.6</text><text transform="translate(721.5,398.2) rotate(90) scale(0.86,1)" font-size="11.3" fill="#222" stroke="#222" stroke-width="0.2" >0.7</text><text transform="translate(721.5,439.8) rotate(90) scale(0.86,1)" font-size="11.3" fill="#222" stroke="#222" stroke-width="0.2" >0.8</text><text transform="translate(721.5,481.40000000000003) rotate(90) scale(0.86,1)" font-size="11.3" fill="#222" stroke="#222" stroke-width="0.2" >0.9</text><path d="M730.4 109.4 L736.4 113.5 L730.4 117.60000000000001 Z" fill="#000" stroke="none" stroke-width="1" /><line x1="1154.5" y1="82" x2="1154.5" y2="518" stroke="#111" stroke-width="1"/><line x1="1155" y1="82.3" x2="1163" y2="82.3" stroke="#111" stroke-width="1"/><text transform="translate(1164.8,93.5) scale(0.86,1)" font-size="11.3" fill="#222" stroke="#222" stroke-width="0.2" >0.851 µm</text><text transform="translate(1164.8,119.8) scale(0.86,1)" font-size="11.3" fill="#222" stroke="#222" stroke-width="0.2" >0.845</text><text transform="translate(1164.8,154.5) scale(0.86,1)" font-size="11.3" fill="#222" stroke="#222" stroke-width="0.2" >0.840</text><text transform="translate(1164.8,189.5) scale(0.86,1)" font-size="11.3" fill="#222" stroke="#222" stroke-width="0.2" >0.835</text><text transform="translate(1164.8,224.0) scale(0.86,1)" font-size="11.3" fill="#222" stroke="#222" stroke-width="0.2" >0.830</text><text transform="translate(1164.8,258.5) scale(0.86,1)" font-size="11.3" fill="#222" stroke="#222" stroke-width="0.2" >0.825</text><text transform="translate(1164.8,293.5) scale(0.86,1)" font-size="11.3" fill="#222" stroke="#222" stroke-width="0.2" >0.820</text><text transform="translate(1164.8,328.0) scale(0.86,1)" font-size="11.3" fill="#222" stroke="#222" stroke-width="0.2" >0.815</text><text transform="translate(1164.8,362.5) scale(0.86,1)" font-size="11.3" fill="#222" stroke="#222" stroke-width="0.2" >0.810</text><text transform="translate(1164.8,397.5) scale(0.86,1)" font-size="11.3" fill="#222" stroke="#222" stroke-width="0.2" >0.805</text><text transform="translate(1164.8,432.0) scale(0.86,1)" font-size="11.3" fill="#222" stroke="#222" stroke-width="0.2" >0.800</text><text transform="translate(1164.8,466.5) scale(0.86,1)" font-size="11.3" fill="#222" stroke="#222" stroke-width="0.2" >0.795</text><text transform="translate(1164.8,500.5) scale(0.86,1)" font-size="11.3" fill="#222" stroke="#222" stroke-width="0.2" >0.790</text><text transform="translate(1164.8,514.0) scale(0.86,1)" font-size="11.3" fill="#222" stroke="#222" stroke-width="0.2" >0.788</text><line x1="717" y1="518.5" x2="1219" y2="518.5" stroke="#d6d6d6" stroke-width="1"/><text transform="translate(719.3,529.5) scale(0.86,1)" font-size="11.3" fill="#222" textLength="238.95" lengthAdjust="spacingAndGlyphs" stroke="#222" stroke-width="0.2" >(0.003 µm, 0.029 µm): 828.00 nm = 8.280e-07 m</text><rect x="1216" y="523" width="1.5" height="1.5" fill="#b8b8b8" /><rect x="1213" y="526" width="1.5" height="1.5" fill="#b8b8b8" /><rect x="1216" y="526" width="1.5" height="1.5" fill="#b8b8b8" /><rect x="1210" y="529" width="1.5" height="1.5" fill="#b8b8b8" /><rect x="1213" y="529" width="1.5" height="1.5" fill="#b8b8b8" /><rect x="1216" y="529" width="1.5" height="1.5" fill="#b8b8b8" /><rect x="288.75" y="356" width="20" height="20" fill="#a9bccf" /><rect x="289.75" y="357" width="18" height="18" fill="#e6e8ea" /><rect x="317.5" y="356" width="20" height="20" fill="#a9bccf" /><rect x="318.5" y="357" width="18" height="18" fill="#e6e8ea" /><rect x="345.6" y="356" width="20" height="20" fill="#a9bccf" /><rect x="346.6" y="357" width="18" height="18" fill="#e6e8ea" /><rect x="373.75" y="356" width="20" height="20" fill="#a9bccf" /><rect x="374.75" y="357" width="18" height="18" fill="#e6e8ea" /><rect x="402.5" y="356" width="20" height="20" fill="#a9bccf" /><rect x="403.5" y="357" width="18" height="18" fill="#e6e8ea" /><path d="M292.75 357 V375 M304.75 357 V375" fill="none" stroke="#555" stroke-width="1.2" stroke-dasharray="1.2 1.2"/><path d="M289.75 374 Q293.75 374 294.75 366 Q295.75 360 298.75 360 Q301.75 360 302.75 366 Q303.75 374 307.75 374" fill="none" stroke="#222" stroke-width="1.8" /><path d="M289.75 374 l2 -2 M289.75 374 l2 2 M307.75 374 l-2 -2 M307.75 374 l-2 2" fill="none" stroke="#222" stroke-width="1.2" /><path d="M318.5 375 Q324.5 372 326.0 357 M329.0 357 Q330.5 372 336.5 375" fill="none" stroke="#b85a5a" stroke-width="1.6" /><path d="M320.5 375 Q325.5 370 327.0 357 M328.0 357 Q329.5 370 334.5 375" fill="none" stroke="#333" stroke-width="1.6" /><path d="M346.6 364 L350.6 359 L354.6 363 L357.6 358 L361.6 362" fill="none" stroke="#222" stroke-width="1.7" /><path d="M346.6 371 L350.6 367 L354.6 372 L358.6 371 L364.6 372" fill="none" stroke="#222" stroke-width="1.7" /><path d="M347.6 369 L358.6 358" fill="none" stroke="#c05050" stroke-width="1.5" /><path d="M361.6 362 V370 M359.1 367.5 l2.5 3 l2.5 -3" fill="none" stroke="#c05050" stroke-width="1.5" /><path d="M374.75 365 Q378.75 362 381.75 365 Q385.75 368 386.75 363 Q387.75 358 392.75 359" fill="none" stroke="#222" stroke-width="1.6" /><path d="M381.75 370 Q385.75 366 387.75 369 Q389.75 373 392.75 372" fill="none" stroke="#222" stroke-width="1.6" /><line x1="384.25" y1="357" x2="384.25" y2="376" stroke="#c05050" stroke-width="1.6"/><path d="M404.5 359 V374 H420.5 V359" fill="none" stroke="#333" stroke-width="2" /><path d="M406.5 362 H412.5 V367 H406.5 Z" fill="none" stroke="#333" stroke-width="1.2" /><path d="M414.5 361 l2 2 m-2 0 l2 -2 M416.5 366 l2 2 M408.5 370 h8" fill="none" stroke="#555" stroke-width="0.9" /><rect x="409.5" y="357" width="3" height="2" fill="#c04040" /><rect x="288.5" y="385.5" width="7" height="6.5" fill="#f4f4f4" stroke="#9aa0a8" stroke-width="1"/><line x1="290" y1="388.8" x2="294" y2="388.8" stroke="#3a6fc0" stroke-width="1"/><text transform="translate(300.5,391.2) scale(0.86,1)" font-size="9.22" fill="#333" stroke="#333" stroke-width="0.2" >Tools</text><path d="M290.25 399.5 L290.25 413 L293.25 410 L295.95 416 L297.95 415 L295.25 409.5 L299.25 409 Z" fill="#fff" stroke="#222" stroke-width="1" /><rect x="303.25" y="400" width="5" height="17" fill="#222" /><rect x="304.25" y="401" width="3" height="15" fill="#f0b000" /><line x1="304.25" y1="403.5" x2="305.75" y2="403.5" stroke="#444" stroke-width="0.8"/><line x1="304.25" y1="405.5" x2="305.75" y2="405.5" stroke="#444" stroke-width="0.8"/><line x1="304.25" y1="407.5" x2="305.75" y2="407.5" stroke="#444" stroke-width="0.8"/><line x1="304.25" y1="409.5" x2="305.75" y2="409.5" stroke="#444" stroke-width="0.8"/><line x1="304.25" y1="411.5" x2="305.75" y2="411.5" stroke="#444" stroke-width="0.8"/><line x1="304.25" y1="413.5" x2="305.75" y2="413.5" stroke="#444" stroke-width="0.8"/><line x1="304.25" y1="415.5" x2="305.75" y2="415.5" stroke="#444" stroke-width="0.8"/><line x1="320.5" y1="417" x2="326.5" y2="401" stroke="#111" stroke-width="1.6"/><path d="M320.5 414.5 l2.5 2.5 l-2.5 2.5 l-2.5 -2.5 Z M326.5 398.5 l2.5 2.5 l-2.5 2.5 l-2.5 -2.5 Z" fill="#111" stroke="none" stroke-width="1" /><rect x="331.0" y="400" width="5" height="17" fill="#222" /><rect x="332.0" y="401" width="3" height="15" fill="#f0b000" /><line x1="332.0" y1="403.5" x2="333.5" y2="403.5" stroke="#444" stroke-width="0.8"/><line x1="332.0" y1="405.5" x2="333.5" y2="405.5" stroke="#444" stroke-width="0.8"/><line x1="332.0" y1="407.5" x2="333.5" y2="407.5" stroke="#444" stroke-width="0.8"/><line x1="332.0" y1="409.5" x2="333.5" y2="409.5" stroke="#444" stroke-width="0.8"/><line x1="332.0" y1="411.5" x2="333.5" y2="411.5" stroke="#444" stroke-width="0.8"/><line x1="332.0" y1="413.5" x2="333.5" y2="413.5" stroke="#444" stroke-width="0.8"/><line x1="332.0" y1="415.5" x2="333.5" y2="415.5" stroke="#444" stroke-width="0.8"/><rect x="341.6" y="394.4" width="28.4" height="29.4" fill="#c6def5" /><rect x="343.5" y="396.5" width="24" height="25" fill="#c6def5" stroke="#8fb8e0" stroke-width="1"/><path d="M345.5 398.5 h20 v20 h-20 Z" fill="none" stroke="#666" stroke-width="0.8" stroke-dasharray="1.5 1"/><line x1="355.6" y1="400" x2="355.6" y2="418" stroke="#111" stroke-width="1.5"/><line x1="346.6" y1="408.75" x2="364.6" y2="408.75" stroke="#111" stroke-width="1.5"/><path d="M352.6 408.75 a3 3 0 1 0 6 0 a3 3 0 1 0 -6 0" fill="#111" stroke="none" stroke-width="1" /><line x1="353.1" y1="400.5" x2="358.1" y2="400.5" stroke="#111" stroke-width="2"/><line x1="353.1" y1="417.5" x2="358.1" y2="417.5" stroke="#111" stroke-width="2"/><line x1="346.1" y1="406.25" x2="346.1" y2="411.25" stroke="#111" stroke-width="2"/><line x1="365.1" y1="406.25" x2="365.1" y2="411.25" stroke="#111" stroke-width="2"/><path d="M377.75 412 Q379.75 410 380.75 404 Q382.75 399 385.75 401 Q386.75 404 387.75 410 Q389.75 412 391.75 413 Z" fill="#6cbf3c" stroke="#111" stroke-width="1.2" /><line x1="375.75" y1="417" x2="390.75" y2="415" stroke="#111" stroke-width="1.4"/><path d="M375.75 414.5 l2.5 2.5 l-2.5 2.5 l-2.5 -2.5 Z M390.75 412.5 l2.5 2.5 l-2.5 2.5 l-2.5 -2.5 Z" fill="#111" stroke="none" stroke-width="1" /><path d="M404.5 407 Q409.5 406 410.5 401 Q412.5 398 415.5 400 Q416.5 405 421.5 406 Z" fill="#6cbf3c" stroke="#111" stroke-width="1.2" /><path d="M410.5 418 Q410.5 411 402.5 409" fill="none" stroke="#333" stroke-width="1" /><path d="M413.5 418 Q413.5 411 405.5 409" fill="none" stroke="#333" stroke-width="1" /><path d="M416.5 418 Q416.5 411 408.5 409" fill="none" stroke="#333" stroke-width="1" /><path d="M419.5 418 Q419.5 411 411.5 409" fill="none" stroke="#333" stroke-width="1" /><path d="M404.0 414.5 l2.5 2.5 l-2.5 2.5 l-2.5 -2.5 Z" fill="#111" stroke="none" stroke-width="1" /><path d="M288.75 448.5 L292.75 439.5 L307.75 439.5 L303.75 448.5 Z" fill="#74c046" stroke="#222" stroke-width="1" /><path d="M291.75 430 Q291.75 444 294.75 445 M291.75 441 Q295.75 432 307.75 432.5" fill="none" stroke="#222" stroke-width="1.4" /><path d="M294.75 444 l2 -2 M294.75 444 l2.5 0.5" fill="none" stroke="#111" stroke-width="1.5" /><rect x="319.0" y="431" width="4.5" height="17" fill="#222" /><rect x="320.0" y="432" width="2.5" height="15" fill="#f0b000" /><line x1="318.5" y1="429.5" x2="324.0" y2="429.5" stroke="#222" stroke-width="1"/><line x1="318.5" y1="448.5" x2="324.0" y2="448.5" stroke="#222" stroke-width="1"/><text transform="translate(326.5,438) scale(0.86,1)" font-size="10.38" fill="#111" font-weight="bold" stroke="#111" stroke-width="0.2" >µ</text><text transform="translate(328.0,447.5) scale(0.86,1)" font-size="10.95" fill="#111" font-weight="bold" stroke="#111" stroke-width="0.2" >σ</text><rect x="345.6" y="429.4" width="20" height="20" fill="#8ec4f4" /><rect x="346.6" y="430.4" width="18" height="18" fill="#ffffff" /><line x1="349.6" y1="430.4" x2="349.6" y2="448.4" stroke="#dde3ea" stroke-width="0.6"/><line x1="346.6" y1="433.4" x2="364.6" y2="433.4" stroke="#dde3ea" stroke-width="0.6"/><line x1="352.6" y1="430.4" x2="352.6" y2="448.4" stroke="#dde3ea" stroke-width="0.6"/><line x1="346.6" y1="436.4" x2="364.6" y2="436.4" stroke="#dde3ea" stroke-width="0.6"/><line x1="355.6" y1="430.4" x2="355.6" y2="448.4" stroke="#dde3ea" stroke-width="0.6"/><line x1="346.6" y1="439.4" x2="364.6" y2="439.4" stroke="#dde3ea" stroke-width="0.6"/><line x1="358.6" y1="430.4" x2="358.6" y2="448.4" stroke="#dde3ea" stroke-width="0.6"/><line x1="346.6" y1="442.4" x2="364.6" y2="442.4" stroke="#dde3ea" stroke-width="0.6"/><line x1="361.6" y1="430.4" x2="361.6" y2="448.4" stroke="#dde3ea" stroke-width="0.6"/><line x1="346.6" y1="445.4" x2="364.6" y2="445.4" stroke="#dde3ea" stroke-width="0.6"/><path d="M347.6 432 Q352.6 436 354.6 441 Q357.6 447 364.6 447" fill="none" stroke="#111" stroke-width="1.4" /><rect x="373.75" y="429.4" width="20" height="20" fill="#8ec4f4" /><rect x="374.75" y="430.4" width="18" height="18" fill="#ffffff" /><line x1="377.75" y1="430.4" x2="377.75" y2="448.4" stroke="#dde3ea" stroke-width="0.6"/><line x1="374.75" y1="433.4" x2="392.75" y2="433.4" stroke="#dde3ea" stroke-width="0.6"/><line x1="380.75" y1="430.4" x2="380.75" y2="448.4" stroke="#dde3ea" stroke-width="0.6"/><line x1="374.75" y1="436.4" x2="392.75" y2="436.4" stroke="#dde3ea" stroke-width="0.6"/><line x1="383.75" y1="430.4" x2="383.75" y2="448.4" stroke="#dde3ea" stroke-width="0.6"/><line x1="374.75" y1="439.4" x2="392.75" y2="439.4" stroke="#dde3ea" stroke-width="0.6"/><line x1="386.75" y1="430.4" x2="386.75" y2="448.4" stroke="#dde3ea" stroke-width="0.6"/><line x1="374.75" y1="442.4" x2="392.75" y2="442.4" stroke="#dde3ea" stroke-width="0.6"/><line x1="389.75" y1="430.4" x2="389.75" y2="448.4" stroke="#dde3ea" stroke-width="0.6"/><line x1="374.75" y1="445.4" x2="392.75" y2="445.4" stroke="#dde3ea" stroke-width="0.6"/><path d="M377.75 431.5 Q385.75 431 384.75 435 Q380.75 438 385.75 440 Q390.75 443 383.75 446 L375.75 448" fill="none" stroke="#111" stroke-width="1.4" /><rect x="403.0" y="443.4" width="19" height="6" fill="#222" /><rect x="404.0" y="444.4" width="17" height="4" fill="#f0b000" /><path d="M403.5 437 L405.5 431 L407.5 438 L409.5 430 L411.5 437 L413.5 431 L415.5 439 L417.5 430 L419.5 438 L421.5 433" fill="none" stroke="#e02020" stroke-width="1.1" /><path d="M404.5 433 L406.5 438 L408.5 432 L410.5 436 L412.5 430 L414.5 437 L416.5 432" fill="none" stroke="#444" stroke-width="0.8" /><rect x="290.75" y="469" width="16" height="3" fill="#222" /><rect x="291.25" y="469.4" width="15" height="2.2" fill="#f0b000" /><path d="M296.75 469 L302.75 460" fill="none" stroke="#222" stroke-width="3" /><path d="M296.75 469 L302.75 460" fill="none" stroke="#f0b000" stroke-width="1.6" /><path d="M289.75 476 Q292.75 473 294.75 476 Q297.75 478 299.75 474 Q302.75 478 304.75 474 L307.75 476" fill="none" stroke="#111" stroke-width="1.4" /><rect x="317.5" y="459.4" width="20" height="20" fill="#0a2a50" /><defs><linearGradient id="bg1" x1="0" y1="0" x2="1" y2="1"><stop offset="0" stop-color="#8cc8f8"/><stop offset="0.6" stop-color="#2d82d0"/><stop offset="1" stop-color="#0c3d78"/></linearGradient></defs><rect x="318.5" y="460.4" width="18" height="18" fill="url(#bg1)" /><path d="M322.5 463 L334.5 470 L322.5 476 Z" fill="none" stroke="#fff" stroke-width="1.5" /><rect x="345.6" y="459.4" width="20" height="20" fill="#333" /><rect x="346.6" y="460.4" width="18" height="18" fill="#d8e2ee" /><rect x="346.6" y="462.0" width="18" height="2" fill="#7a8796" /><rect x="346.6" y="466.3" width="18" height="2" fill="#7a8796" /><rect x="346.6" y="470.6" width="18" height="2" fill="#7a8796" /><rect x="346.6" y="474.9" width="18" height="2" fill="#7a8796" /><line x1="349.6" y1="477" x2="354.6" y2="468" stroke="#e02020" stroke-width="1.8"/><line x1="353.6" y1="461" x2="362.6" y2="467" stroke="#e02020" stroke-width="1.8"/><rect x="379.75" y="466" width="13" height="10" fill="#6cbf3c" /><path d="M379.75 466 h13 v10 h-13 Z" fill="none" stroke="#222" stroke-width="0.9" stroke-dasharray="1.5 1"/><path d="M374.75 468 L391.75 466 M377.75 460 L385.75 467" fill="none" stroke="#222" stroke-width="1.2" /><path d="M375.75 468 a2 2 0 1 0 0.1 0 M378.75 461 a2 2 0 1 0 0.1 0" fill="#fff" stroke="#222" stroke-width="1" /><path d="M403.5 465 h12 v12 h-12 Z" fill="#c8685a" stroke="#333" stroke-width="0.9" stroke-dasharray="1.5 1"/><path d="M410.5 474 L419.5 461 L422.5 463 L413.5 476 L410.5 477 Z" fill="#f0b000" stroke="#222" stroke-width="1" /><path d="M294.75 489.5 Q300.75 490 299.75 499 Q299.75 507 295.75 507 Q289.75 507 289.75 499 Q289.75 491 294.75 489.5 Z" fill="#c8685a" stroke="#555" stroke-width="0.8" stroke-dasharray="1.5 1"/><rect x="302.25" y="489.5" width="6" height="18" fill="#222" /><rect x="303.25" y="490.5" width="4" height="16" fill="#f0b000" /><line x1="303.25" y1="493.0" x2="304.75" y2="493.0" stroke="#444" stroke-width="0.8"/><line x1="303.25" y1="495.0" x2="304.75" y2="495.0" stroke="#444" stroke-width="0.8"/><line x1="303.25" y1="497.0" x2="304.75" y2="497.0" stroke="#444" stroke-width="0.8"/><line x1="303.25" y1="499.0" x2="304.75" y2="499.0" stroke="#444" stroke-width="0.8"/><line x1="303.25" y1="501.0" x2="304.75" y2="501.0" stroke="#444" stroke-width="0.8"/><line x1="303.25" y1="503.0" x2="304.75" y2="503.0" stroke="#444" stroke-width="0.8"/><line x1="303.25" y1="505.0" x2="304.75" y2="505.0" stroke="#444" stroke-width="0.8"/><rect x="317.5" y="489.4" width="20" height="20" fill="#444" /><rect x="318.5" y="490.4" width="18" height="18" fill="#c9def2" /><path d="M322.9 494.5 a1.6 1.6 0 1 0 3.2 0 a1.6 1.6 0 1 0 -3.2 0" fill="#333" stroke="none" stroke-width="1" /><path d="M330.9 499.5 a1.6 1.6 0 1 0 3.2 0 a1.6 1.6 0 1 0 -3.2 0" fill="#333" stroke="none" stroke-width="1" /><path d="M320.9 505 a1.6 1.6 0 1 0 3.2 0 a1.6 1.6 0 1 0 -3.2 0" fill="#333" stroke="none" stroke-width="1" /><path d="M325.5 497 l4 4 m0 -4 l-4 4 M330.5 502 l4 4 m0 -4 l-4 4" fill="none" stroke="#e02020" stroke-width="1.6" /><rect x="345.6" y="489.4" width="20" height="20" fill="#444" /><rect x="346.6" y="490.4" width="18" height="18" fill="#c9def2" /><rect x="352.1" y="496" width="11" height="11" fill="#555" /><rect x="353.1" y="497" width="9" height="9" fill="#fff" /><path d="M354.6 498.5 l5 5 m0 -5 l-5 5" fill="none" stroke="#e02020" stroke-width="1.6" /><line x1="374.75" y1="491.5" x2="390.75" y2="491.5" stroke="#888" stroke-width="0.6"/><line x1="374.75" y1="506.5" x2="390.75" y2="506.5" stroke="#888" stroke-width="0.6"/><line x1="379.75" y1="492" x2="379.75" y2="506" stroke="#111" stroke-width="1.3"/><path d="M377.25 494.5 L379.75 491 L382.25 494.5 Z M377.25 503.5 L379.75 507 L382.25 503.5 Z" fill="#111" stroke="none" stroke-width="1" /><defs><linearGradient id="ob" x1="0" y1="0" x2="0" y2="1"><stop offset="0" stop-color="#ffd6a0"/><stop offset="0.45" stop-color="#f5a000"/><stop offset="0.7" stop-color="#4a90d0"/><stop offset="1" stop-color="#111"/></linearGradient></defs><rect x="384.75" y="489.5" width="5.5" height="20" fill="#333" /><rect x="385.55" y="490.3" width="3.9" height="18.4" fill="url(#ob)" /><rect x="402.5" y="489.4" width="20" height="20" fill="#333" /><rect x="403.5" y="490.4" width="18" height="18" fill="#4a90d8" /><rect x="403.5" y="490.4" width="9" height="18" fill="#d8d8d8" /><rect x="403.5" y="490.4" width="1" height="1" fill="#222" /><rect x="403.5" y="492.4" width="1" height="1" fill="#222" /><rect x="403.5" y="495.4" width="1" height="1" fill="#222" /><rect x="403.5" y="496.4" width="1" height="1" fill="#222" /><rect x="403.5" y="498.4" width="1" height="1" fill="#222" /><rect x="403.5" y="499.4" width="1" height="1" fill="#222" /><rect x="403.5" y="501.4" width="1" height="1" fill="#222" /><rect x="403.5" y="503.4" width="1" height="1" fill="#222" /><rect x="403.5" y="505.4" width="1" height="1" fill="#222" /><rect x="404.5" y="493.4" width="1" height="1" fill="#222" /><rect x="404.5" y="496.4" width="1" height="1" fill="#222" /><rect x="404.5" y="497.4" width="1" height="1" fill="#222" /><rect x="404.5" y="499.4" width="1" height="1" fill="#222" /><rect x="404.5" y="504.4" width="1" height="1" fill="#222" /><rect x="404.5" y="506.4" width="1" height="1" fill="#222" /><rect x="405.5" y="491.4" width="1" height="1" fill="#222" /><rect x="405.5" y="492.4" width="1" height="1" fill="#222" /><rect x="405.5" y="493.4" width="1" height="1" fill="#222" /><rect x="405.5" y="495.4" width="1" height="1" fill="#222" /><rect x="405.5" y="497.4" width="1" height="1" fill="#222" /><rect x="405.5" y="499.4" width="1" height="1" fill="#222" /><rect x="405.5" y="500.4" width="1" height="1" fill="#222" /><rect x="406.5" y="491.4" width="1" height="1" fill="#222" /><rect x="406.5" y="497.4" width="1" height="1" fill="#222" /><rect x="406.5" y="500.4" width="1" height="1" fill="#222" /><rect x="406.5" y="501.4" width="1" height="1" fill="#222" /><rect x="406.5" y="504.4" width="1" height="1" fill="#222" /><rect x="406.5" y="506.4" width="1" height="1" fill="#222" /><rect x="406.5" y="507.4" width="1" height="1" fill="#222" /><rect x="407.5" y="490.4" width="1" height="1" fill="#222" /><rect x="407.5" y="493.4" width="1" height="1" fill="#222" /><rect x="407.5" y="495.4" width="1" height="1" fill="#222" /><rect x="407.5" y="497.4" width="1" height="1" fill="#222" /><rect x="407.5" y="502.4" width="1" height="1" fill="#222" /><rect x="407.5" y="503.4" width="1" height="1" fill="#222" /><rect x="407.5" y="505.4" width="1" height="1" fill="#222" /><rect x="407.5" y="506.4" width="1" height="1" fill="#222" /><rect x="407.5" y="507.4" width="1" height="1" fill="#222" /><rect x="408.5" y="491.4" width="1" height="1" fill="#222" /><rect x="408.5" y="492.4" width="1" height="1" fill="#222" /><rect x="408.5" y="494.4" width="1" height="1" fill="#222" /><rect x="408.5" y="497.4" width="1" height="1" fill="#222" /><rect x="408.5" y="498.4" width="1" height="1" fill="#222" /><rect x="408.5" y="506.4" width="1" height="1" fill="#222" /><rect x="409.5" y="490.4" width="1" height="1" fill="#222" /><rect x="409.5" y="491.4" width="1" height="1" fill="#222" /><rect x="409.5" y="495.4" width="1" height="1" fill="#222" /><rect x="409.5" y="496.4" width="1" height="1" fill="#222" /><rect x="409.5" y="498.4" width="1" height="1" fill="#222" /><rect x="409.5" y="501.4" width="1" height="1" fill="#222" /><rect x="409.5" y="503.4" width="1" height="1" fill="#222" /><rect x="409.5" y="505.4" width="1" height="1" fill="#222" /><rect x="410.5" y="490.4" width="1" height="1" fill="#222" /><rect x="410.5" y="491.4" width="1" height="1" fill="#222" /><rect x="410.5" y="494.4" width="1" height="1" fill="#222" /><rect x="410.5" y="495.4" width="1" height="1" fill="#222" /><rect x="410.5" y="497.4" width="1" height="1" fill="#222" /><rect x="410.5" y="498.4" width="1" height="1" fill="#222" /><rect x="410.5" y="499.4" width="1" height="1" fill="#222" /><rect x="410.5" y="500.4" width="1" height="1" fill="#222" /><rect x="410.5" y="502.4" width="1" height="1" fill="#222" /><rect x="410.5" y="503.4" width="1" height="1" fill="#222" /><rect x="410.5" y="505.4" width="1" height="1" fill="#222" /><rect x="411.5" y="490.4" width="1" height="1" fill="#222" /><rect x="411.5" y="491.4" width="1" height="1" fill="#222" /><rect x="411.5" y="493.4" width="1" height="1" fill="#222" /><rect x="411.5" y="494.4" width="1" height="1" fill="#222" /><rect x="411.5" y="495.4" width="1" height="1" fill="#222" /><rect x="411.5" y="497.4" width="1" height="1" fill="#222" /><rect x="411.5" y="498.4" width="1" height="1" fill="#222" /><rect x="411.5" y="499.4" width="1" height="1" fill="#222" /><rect x="411.5" y="501.4" width="1" height="1" fill="#222" /><rect x="411.5" y="503.4" width="1" height="1" fill="#222" /><rect x="411.5" y="504.4" width="1" height="1" fill="#222" /><rect x="411.5" y="507.4" width="1" height="1" fill="#222" /><path d="M408.5 497.5 h6 v-3 l6 5 l-6 5 v-3 h-6 Z" fill="#fff" stroke="none" stroke-width="1" /><path d="M289.75 520 l3 3 m0 -3 l-3 3" fill="none" stroke="#111" stroke-width="1" /><line x1="292.75" y1="536" x2="298.75" y2="521" stroke="#111" stroke-width="1.5"/><path d="M292.75 533.5 l2.5 2.5 l-2.5 2.5 l-2.5 -2.5 Z M298.75 518.5 l2.5 2.5 l-2.5 2.5 l-2.5 -2.5 Z" fill="#111" stroke="none" stroke-width="1" /><rect x="301.75" y="528.5" width="5" height="9" fill="none" stroke="#111" stroke-width="1.6"/></svg>
<canvas class="k-tipicon" width="13" height="14" style="left:140px;top:53px;width:13px;height:14px;z-index:2;background:radial-gradient(circle at 50% 50%,#f6e878,#a06a08)"></canvas>
<canvas class="k-pyr1" width="54" height="55" style="left:153px;top:93px;width:54px;height:55px;z-index:2;background:radial-gradient(circle at 50% 50%,#f6e878,#c08810 45%,#5a2a04)"></canvas>
<canvas class="k-cbar" width="9" height="74" style="left:209px;top:74px;width:9px;height:74px;z-index:2;background:linear-gradient(#faf280,#d49e12 34%,#73320a 62%,#000)"></canvas>
<canvas class="k-tipicon" width="13" height="13" style="left:108px;top:175.5px;width:13px;height:13px;z-index:2;background:radial-gradient(circle at 50% 50%,#f6e878,#a06a08)"></canvas>
<canvas class="k-pyr2" width="92" height="92" style="left:121px;top:216px;width:92px;height:92px;z-index:2;background:radial-gradient(circle at 50% 45%,#f6e878,#c08810 45%,#5a2a04)"></canvas>
<canvas class="k-cbar" width="8" height="112" style="left:214px;top:195.7px;width:8px;height:112.3px;z-index:2;background:linear-gradient(#faf280,#d49e12 34%,#73320a 62%,#000)"></canvas>
<canvas class="k-tipicon" width="13" height="13" style="left:48.4px;top:339.6px;width:13.2px;height:12.8px;z-index:2;background:radial-gradient(circle at 50% 50%,#f6e878,#a06a08)"></canvas>
<canvas class="k-pyr3" width="150" height="150" style="left:62px;top:384.5px;width:150px;height:150px;z-index:2;background:radial-gradient(circle at 48% 50%,#f6e878,#c08810 45%,#5a2a04)"></canvas>
<canvas class="k-cbar" width="8" height="180" style="left:213px;top:360px;width:8px;height:180px;z-index:2;background:linear-gradient(#faf280,#d49e12 34%,#73320a 62%,#000)"></canvas>
<canvas class="k-thumb" width="49" height="44" style="left:443px;top:97.8px;width:49px;height:44px;z-index:2;background:#b4861c"></canvas>
<canvas class="k-thumb" width="49" height="44" style="left:443px;top:137.8px;width:49px;height:44px;z-index:2;background:#b4861c"></canvas>
<canvas class="k-thumb" width="49" height="44" style="left:443px;top:174.2px;width:49px;height:44px;z-index:2;background:#b4861c"></canvas>
<canvas class="k-thumb" width="49" height="44" style="left:443px;top:214.2px;width:49px;height:44px;z-index:2;background:#b4861c"></canvas>
<canvas class="k-noiseicon" width="14" height="14" style="left:724px;top:61.3px;width:13.5px;height:13.7px;z-index:2;background:#b4861c"></canvas>
<canvas class="k-noise" width="416" height="416" style="left:737.5px;top:101.3px;width:416px;height:416.5px;z-index:2;background:#b4861c"></canvas>
<canvas class="k-cbar" width="8" height="436" style="left:1155px;top:82px;width:7.5px;height:436px;z-index:2;background:linear-gradient(#faf280,#d49e12 34%,#73320a 62%,#000)"></canvas>
<svg width="1232" height="592" viewBox="0 0 1232 592" style="z-index:3"><line x1="217.5" y1="74" x2="217.5" y2="148" stroke="#333" stroke-width="1"/><line x1="221.5" y1="195.7" x2="221.5" y2="308" stroke="#333" stroke-width="1"/><line x1="220.5" y1="360" x2="220.5" y2="540" stroke="#333" stroke-width="1"/><line x1="1162" y1="82" x2="1162" y2="518" stroke="#333" stroke-width="1"/><rect x="287.5" y="105.5" width="216.0" height="258.5" fill="#000" opacity="0.08"/><rect x="285.5" y="103.5" width="216.0" height="258.5" fill="#a0a0a0" /><rect x="286.5" y="104.5" width="214.0" height="256.5" fill="#f0f0f0" /><text transform="translate(309.4,117.85) scale(0.86,1)" font-size="11.3" fill="#1a1a1a" stroke="#1a1a1a" stroke-width="0.2">Repeat (Model Tip)</text><text transform="translate(494,117.85) scale(0.86,1)" font-size="11.3" fill="#1a1a1a" text-anchor="end" stroke="#1a1a1a" stroke-width="0.2" >Ctrl+F</text><text transform="translate(309.4,133.7) scale(0.86,1)" font-size="11.3" fill="#1a1a1a" stroke="#1a1a1a" stroke-width="0.2">Re-show (Model Tip)</text><text transform="translate(494,133.7) scale(0.86,1)" font-size="11.3" fill="#1a1a1a" text-anchor="end" stroke="#1a1a1a" stroke-width="0.2" >Shift+Ctrl+F</text><text transform="translate(309.4,149.54999999999998) scale(0.86,1)" font-size="11.3" fill="#1a1a1a" stroke="#1a1a1a" stroke-width="0.2"><tspan text-decoration="underline">B</tspan>asic Operations</text><path d="M491.5 142.45 L495.0 145.95 L491.5 149.45 Z" fill="#111" stroke="none" stroke-width="1" /><text transform="translate(309.4,165.4) scale(0.86,1)" font-size="11.3" fill="#1a1a1a" stroke="#1a1a1a" stroke-width="0.2">Cali<tspan text-decoration="underline">b</tspan>ration</text><path d="M491.5 158.3 L495.0 161.8 L491.5 165.3 Z" fill="#111" stroke="none" stroke-width="1" /><text transform="translate(309.4,181.25) scale(0.86,1)" font-size="11.3" fill="#1a1a1a" stroke="#1a1a1a" stroke-width="0.2"><tspan text-decoration="underline">C</tspan>orrect Data</text><path d="M491.5 174.15 L495.0 177.65 L491.5 181.15 Z" fill="#111" stroke="none" stroke-width="1" /><text transform="translate(309.4,197.1) scale(0.86,1)" font-size="11.3" fill="#1a1a1a" stroke="#1a1a1a" stroke-width="0.2"><tspan text-decoration="underline">D</tspan>istortion</text><path d="M491.5 190.0 L495.0 193.5 L491.5 197.0 Z" fill="#111" stroke="none" stroke-width="1" /><text transform="translate(309.4,212.95) scale(0.86,1)" font-size="11.3" fill="#1a1a1a" stroke="#1a1a1a" stroke-width="0.2"><tspan text-decoration="underline">G</tspan>rains</text><path d="M491.5 205.85 L495.0 209.35 L491.5 212.85 Z" fill="#111" stroke="none" stroke-width="1" /><text transform="translate(309.4,228.79999999999998) scale(0.86,1)" font-size="11.3" fill="#1a1a1a" stroke="#1a1a1a" stroke-width="0.2"><tspan text-decoration="underline">I</tspan>ntegral Transforms</text><path d="M491.5 221.7 L495.0 225.2 L491.5 228.7 Z" fill="#111" stroke="none" stroke-width="1" /><text transform="translate(309.4,244.65) scale(0.86,1)" font-size="11.3" fill="#1a1a1a" stroke="#1a1a1a" stroke-width="0.2"><tspan text-decoration="underline">L</tspan>evel</text><path d="M491.5 237.55 L495.0 241.05 L491.5 244.55 Z" fill="#111" stroke="none" stroke-width="1" /><text transform="translate(309.4,260.5) scale(0.86,1)" font-size="11.3" fill="#1a1a1a" stroke="#1a1a1a" stroke-width="0.2"><tspan text-decoration="underline">M</tspan>ask</text><path d="M491.5 253.39999999999998 L495.0 256.9 L491.5 260.4 Z" fill="#111" stroke="none" stroke-width="1" /><text transform="translate(309.4,276.35) scale(0.86,1)" font-size="11.3" fill="#1a1a1a" stroke="#1a1a1a" stroke-width="0.2">Measure <tspan text-decoration="underline">F</tspan>eatures</text><path d="M491.5 269.25 L495.0 272.75 L491.5 276.25 Z" fill="#111" stroke="none" stroke-width="1" /><text transform="translate(309.4,292.20000000000005) scale(0.86,1)" font-size="11.3" fill="#1a1a1a" stroke="#1a1a1a" stroke-width="0.2">M<tspan text-decoration="underline">u</tspan>ltidata</text><path d="M491.5 285.1 L495.0 288.6 L491.5 292.1 Z" fill="#111" stroke="none" stroke-width="1" /><text transform="translate(309.4,308.05) scale(0.86,1)" font-size="11.3" fill="#1a1a1a" stroke="#1a1a1a" stroke-width="0.2"><tspan text-decoration="underline">P</tspan>resentation</text><path d="M491.5 300.95 L495.0 304.45 L491.5 307.95 Z" fill="#111" stroke="none" stroke-width="1" /><rect x="287.5" y="312" width="212.5" height="15.5" fill="#91c9f7" /><text transform="translate(309.4,323.9) scale(0.86,1)" font-size="11.3" fill="#1a1a1a" stroke="#1a1a1a" stroke-width="0.2">SPM M<tspan text-decoration="underline">o</tspan>des</text><path d="M491.5 316.79999999999995 L495.0 320.29999999999995 L491.5 323.79999999999995 Z" fill="#111" stroke="none" stroke-width="1" /><text transform="translate(309.4,339.75) scale(0.86,1)" font-size="11.3" fill="#1a1a1a" stroke="#1a1a1a" stroke-width="0.2"><tspan text-decoration="underline">S</tspan>tatistics</text><path d="M491.5 332.65 L495.0 336.15 L491.5 339.65 Z" fill="#111" stroke="none" stroke-width="1" /><text transform="translate(309.4,355.6) scale(0.86,1)" font-size="11.3" fill="#1a1a1a" stroke="#1a1a1a" stroke-width="0.2">Synthetic</text><path d="M491.5 348.5 L495.0 352.0 L491.5 355.5 Z" fill="#111" stroke="none" stroke-width="1" /><rect x="503" y="311.5" width="173.5" height="52.0" fill="#000" opacity="0.08"/><rect x="501" y="309.5" width="173.5" height="52.0" fill="#a0a0a0" /><rect x="502" y="310.5" width="171.5" height="50.0" fill="#f0f0f0" /><text transform="translate(524,323.6) scale(0.86,1)" font-size="11.3" fill="#1a1a1a" stroke="#1a1a1a" stroke-width="0.2"><tspan text-decoration="underline">F</tspan>orce and Indentation</text><path d="M664.5 316.5 L668.0 320.0 L664.5 323.5 Z" fill="#111" stroke="none" stroke-width="1" /><text transform="translate(524,339.55) scale(0.86,1)" font-size="11.3" fill="#1a1a1a" stroke="#1a1a1a" stroke-width="0.2"><tspan text-decoration="underline">M</tspan>agnetic</text><path d="M664.5 332.45 L668.0 335.95 L664.5 339.45 Z" fill="#111" stroke="none" stroke-width="1" /><rect x="502.5" y="343.8" width="170.5" height="15.6" fill="#91c9f7" /><text transform="translate(524,355.5) scale(0.86,1)" font-size="11.3" fill="#1a1a1a" stroke="#1a1a1a" stroke-width="0.2"><tspan text-decoration="underline">T</tspan>ip</text><path d="M664.5 348.4 L668.0 351.9 L664.5 355.4 Z" fill="#111" stroke="none" stroke-width="1" /><rect x="675" y="343.3" width="165.20000000000005" height="91.5" fill="#000" opacity="0.08"/><rect x="673" y="341.3" width="165.20000000000005" height="91.5" fill="#a0a0a0" /><rect x="674" y="342.3" width="163.20000000000005" height="89.5" fill="#f0f0f0" /><text transform="translate(696,356.1) scale(0.86,1)" font-size="11.3" fill="#1a1a1a" stroke="#1a1a1a" stroke-width="0.2"><tspan text-decoration="underline">B</tspan>lind Estimation...</text><path d="M679 349.0 h10" fill="none" stroke="#333" stroke-width="1.5" /><path d="M683 349.5 l2.5 6 l3 -6" fill="none" stroke="#333" stroke-width="1.2" /><path d="M682 349.5 l-2 6" fill="none" stroke="#555" stroke-width="1" /><text transform="translate(696,373.6) scale(0.86,1)" font-size="11.3" fill="#1a1a1a" stroke="#1a1a1a" stroke-width="0.2"><tspan text-decoration="underline">C</tspan>ertainty Map...</text><path d="M679 365.0 h10" fill="none" stroke="#334" stroke-width="1.6" /><path d="M681 365.5 l3 5 l3 -5" fill="none" stroke="#456" stroke-width="1.2" /><rect x="679" y="371.5" width="4" height="3.5" fill="#d04040" /><path d="M684.5 372.0 a2 2 0 1 0 0.1 0" fill="none" stroke="#d04040" stroke-width="1.2" /><rect x="674.5" y="378.8" width="162.5" height="16.7" fill="#91c9f7" /><text transform="translate(696,391.1) scale(0.86,1)" font-size="11.3" fill="#1a1a1a" stroke="#1a1a1a" stroke-width="0.2"><tspan text-decoration="underline">D</tspan>ilation...</text><path d="M679 382.5 h9" fill="none" stroke="#333" stroke-width="1.6" /><path d="M680.5 383.0 l3 5 l3 -5" fill="none" stroke="#333" stroke-width="1.2" /><path d="M679 391.5 q2 -5 4.5 0 q2 -5 4.5 0" fill="none" stroke="#d03030" stroke-width="1.3" /><line x1="679" y1="392.0" x2="688" y2="392.0" stroke="#222" stroke-width="1"/><text transform="translate(696,408.6) scale(0.86,1)" font-size="11.3" fill="#1a1a1a" stroke="#1a1a1a" stroke-width="0.2"><tspan text-decoration="underline">M</tspan>odel Tip...</text><path d="M679 402.0 h10" fill="none" stroke="#333" stroke-width="1.5" /><path d="M683 402.5 q2.5 6 5.5 0" fill="none" stroke="#333" stroke-width="1.3" /><text transform="translate(696,426.1) scale(0.86,1)" font-size="11.3" fill="#1a1a1a" stroke="#1a1a1a" stroke-width="0.2"><tspan text-decoration="underline">S</tspan>urface Reconstruction...</text><path d="M679 417.5 h9" fill="none" stroke="#333" stroke-width="1.6" /><path d="M680.5 418.0 l3 5 l3 -5" fill="none" stroke="#333" stroke-width="1.2" /><path d="M679 426.5 q2 -5 4.5 0 q2 -5 4.5 0" fill="none" stroke="#d03030" stroke-width="1.3" /><line x1="679" y1="427.0" x2="688" y2="427.0" stroke="#222" stroke-width="1"/></svg>
</div><script>(function(){
function gold(t){
  if(t<0)t=0; if(t>1)t=1;
  var st=[[0,0,0,0],[0.11,40,15,3],[0.385,115,50,5],[0.55,172,108,8],[0.66,212,158,18],[0.8,232,202,62],[1,250,242,128]];
  for(var i=1;i<st.length;i++){ if(t<=st[i][0]){ var a=st[i-1],b=st[i],f=(t-a[0])/(b[0]-a[0]); return [a[1]+(b[1]-a[1])*f,a[2]+(b[2]-a[2])*f,a[3]+(b[3]-a[3])*f]; } }
  return [252,245,130];
}
function solve(A,P1,h1,P2,h2,hA){
  var a=P1[0]-A[0],b=P1[1]-A[1],c=P2[0]-A[0],d=P2[1]-A[1];
  var e=h1-hA,f=h2-hA, det=a*d-b*c;
  return [(e*d-b*f)/det,(a*f-e*c)/det];
}
function ang(p,A){ return Math.atan2(p[1]-A[1],p[0]-A[0]); }
function pyr(cv,A,L,Rr,B,hL,hR,hB,hA){ hA=hA||1;
  var W=cv.width,H=cv.height,ctx=cv.getContext('2d'),im=ctx.createImageData(W,H),d=im.data;
  var gT=solve(A,L,hL,Rr,hR,hA), gL=solve(A,L,hL,B,hB,hA), gR=solve(A,Rr,hR,B,hB,hA);
  var aL=ang(L,A),aR=ang(Rr,A),aB=ang(B,A);
  for(var y=0;y<H;y++)for(var x=0;x<W;x++){
    var p=[(x+0.5)/W,(y+0.5)/H], a=ang(p,A), g;
    // sectors: angles in canvas coords (y down). top face between aL (~-pi..) and aR (negative), going through -pi/2
    // normalize relative to aB
    function rel(t){ var r=t-aB; while(r<0)r+=2*Math.PI; while(r>=2*Math.PI)r-=2*Math.PI; return r; }
    var ra=rel(a), rL=rel(aL), rR=rel(aR);
    // from B going clockwise(increasing angle): B -> L (left face) -> top -> R -> right face -> B
    if(ra<rL) g=gL; else if(ra<rR) g=gT; else g=gR;
    var h=hA+g[0]*(p[0]-A[0])+g[1]*(p[1]-A[1]);
    var c=gold(h), i=(y*W+x)*4;
    d[i]=c[0];d[i+1]=c[1];d[i+2]=c[2];d[i+3]=255;
  }
  ctx.putImageData(im,0,0);
}
function pyrm(cv,A,hA,faces){
  var W=cv.width,H=cv.height,ctx=cv.getContext('2d'),im=ctx.createImageData(W,H),d=im.data;
  var gs=faces.map(function(f){return solve(A,f[0],f[1],f[2],f[3],hA);});
  for(var y=0;y<H;y++)for(var x=0;x<W;x++){
    var px=(x+0.5)/W,py=(y+0.5)/H,h=1e9;
    for(var k=0;k<gs.length;k++){var v=hA+gs[k][0]*(px-A[0])+gs[k][1]*(py-A[1]); if(v<h)h=v;}
    var c=gold(h),i=(y*W+x)*4;
    d[i]=c[0];d[i+1]=c[1];d[i+2]=c[2];d[i+3]=255;
  }
  ctx.putImageData(im,0,0);
}
function rng(seed){ var s=seed>>>0; return function(){ s=(s*1664525+1013904223)>>>0; return s/4294967296; }; }
function valnoise(N,seed){
  var r=rng(seed),g=new Float32Array(N*N); for(var i=0;i<N*N;i++)g[i]=r();
  return function(x,y){ // x,y in grid units, wrap
    var xi=Math.floor(x),yi=Math.floor(y),fx=x-xi,fy=y-yi;
    fx=fx*fx*(3-2*fx); fy=fy*fy*(3-2*fy);
    var x0=((xi%N)+N)%N,y0=((yi%N)+N)%N,x1=(x0+1)%N,y1=(y0+1)%N;
    var a=g[y0*N+x0],b=g[y0*N+x1],c=g[y1*N+x0],e=g[y1*N+x1];
    return (a+(b-a)*fx)+((c+(e-c)*fx)-(a+(b-a)*fx))*fy;
  };
}
var BL=[ // bright blobs [x,y,r,amp] in 417px image coords
 [49,56,30,1],[74,32,18,0.6],[134,42,26,0.9],[170,71,26,1],[198,21,18,0.6],[155,155,28,0.8],[106,177,15,0.5],[35,102,20,0.5],
 [265,67,22,0.9],[325,67,18,0.8],[286,106,26,0.9],[339,124,18,0.8],[406,85,20,1],[226,18,20,0.6],[356,21,14,0.5],[275,148,20,0.6],
 [131,233,22,1.1],[198,229,18,0.5],[134,307,22,0.5],[159,367,22,0.5],[35,349,22,0.5],
 [219,296,26,0.9],[349,374,30,1.0],[395,257,22,0.8],[342,314,20,0.6],[289,279,20,0.5],[215,229,14,0.4],[272,240,14,0.5]
];
var DK=[[14,21,22,0.8],[106,120,24,0.8],[11,134,20,0.6],[198,106,22,0.6],[198,198,22,0.6],[236,42,20,0.6],[296,35,18,0.5],[395,141,30,0.9],[314,177,22,0.5],[402,191,20,0.6],
 [71,385,26,0.8],[177,325,22,0.5],[7,219,20,0.5],[303,222,20,0.6],[272,328,24,0.8],[360,222,18,0.6],[229,360,20,0.5],[402,342,20,0.4]];
var GRID=[
[2,2,2,3,3,2,3,2,2,2,1.5,2],
[2,3.5,2,3,3.5,2,2,3,2,3,2,2.5],
[2.5,2.5,2,1.5,3,2,2,3,2,2,1.5,3.5],
[1.5,2.5,1.5,1.5,2,2,2.5,3,2.5,3,2,1.5],
[2,2,2,2.5,3,2,2,3,2,2,2,1.5],
[2,2,2,2,2.5,2,2,2.5,2,2,1.5,1.5],
[2,2,2,4,2.5,3,2,2,1.5,2,2,2],
[2,2,2,2,2.5,2.5,2,2,2.5,2,2,2.5],
[2,2,2,2.5,2.5,3.5,2.5,2,2.5,3,2,2],
[2,2,1.5,2.5,2,2.5,2,1.5,2,2,2,2],
[2.5,2,1.5,2.5,2.5,2,2,2,2,3.5,3,2],
[2,2,2,2,2,2,2,2,2.5,3.5,3,2]];
function gridf(X,Y){ // X,Y in 0..417
  var cs=417/12, gx=X/cs-0.5, gy=Y/cs-0.5, sum=0, wsum=0;
  var x0=Math.floor(gx), y0=Math.floor(gy);
  for(var j=y0-1;j<=y0+2;j++)for(var i=x0-1;i<=x0+2;i++){
    var jj=Math.min(11,Math.max(0,j)), ii=Math.min(11,Math.max(0,i));
    var dx=gx-i, dy=gy-j, w=Math.exp(-(dx*dx+dy*dy)/(2*0.45*0.45));
    sum+=w*GRID[jj][ii]; wsum+=w;
  }
  return sum/wsum;
}
function noise(cv,scale,useBlobs,seed){
  var W=cv.width,H=cv.height,ctx=cv.getContext('2d'),im=ctx.createImageData(W,H),d=im.data;
  var sd=seed||7, r=rng(sd*31+5);
  var n1=valnoise(64,sd),n2=valnoise(128,sd+1),n3=valnoise(256,sd+2),n4=valnoise(512,sd+3),n5=valnoise(512,sd+4),n6=valnoise(64,sd+5);
  for(var y=0;y<H;y++)for(var x=0;x<W;x++){
    var X=x*scale,Y=y*scale;
    var v=0.2*(n2(X/9,Y/9)-0.5)+0.12*(n6(X/22,Y/22)-0.5)+0.2*(n3(X/4.5,Y/4.5)-0.5)+0.17*(n4(X/2.2,Y/2.2)-0.5)+0.07*(r()-0.5); var sp=n5(X/1.3,Y/1.3); if(sp>0.9) v-=0.9*(sp-0.9)*1.2;
    if(useBlobs){
      var gg=gridf(X,Y)-2.2; v+=(gg>0?0.32:0.14)*gg*(0.6+0.8*n1(X/9,Y/9));
    } else v+=0.16*(n1(X/40,Y/40)-0.5);
    var t=(useBlobs?0.555:0.6)+0.58*v;
    var c=gold(t),i=(y*W+x)*4;
    d[i]=c[0];d[i+1]=c[1];d[i+2]=c[2];d[i+3]=255;
  }
  ctx.putImageData(im,0,0);
}
function cbar(cv){
  var W=cv.width,H=cv.height,ctx=cv.getContext('2d');
  var gr=ctx.createLinearGradient(0,0,0,H);
  for(var i=0;i<=20;i++){var c=gold(1-i/20); gr.addColorStop(i/20,'rgb('+(c[0]|0)+','+(c[1]|0)+','+(c[2]|0)+')');}
  ctx.fillStyle=gr; ctx.fillRect(0,0,W,H);
}
var cs=document.getElementsByTagName('canvas');
for(var i=0;i<cs.length;i++){
  var cv=cs[i],k=cv.className.slice(2);
  if(k==='pyr1') pyrm(cv,[0.5,0.5],1.2,[[[0,0],0.22,[1,0],0.1],[[0,0.5],0.32,[0,1],0.06],[[1,0.5],0.28,[1,1],0.03]]);
  else if(k==='pyr2') pyrm(cv,[0.5,0.42],1.25,[[[0,0],0.3,[1,0],0.17],[[0,0.45],0.38,[0,1],0.05],[[1,0.45],0.35,[1,1],0.02]]);
  else if(k==='pyr3') pyr(cv,[0.48,0.5],[0,0.13],[1,0.30],[0.45,1],0.62,0.64,0.6);
  else if(k==='tipicon') pyr(cv,[0.5,0.55],[0,0.03],[1,0.03],[0.5,1],0.55,0.5,0.7);
  else if(k==='cbar') cbar(cv);
  else if(k==='noise') noise(cv,416/cv.width,true,7);
  else if(k==='noiseicon') noise(cv,6,false,11);
  else if(k==='thumb') noise(cv,3,false,13);
}
})();
</script></body></html>
